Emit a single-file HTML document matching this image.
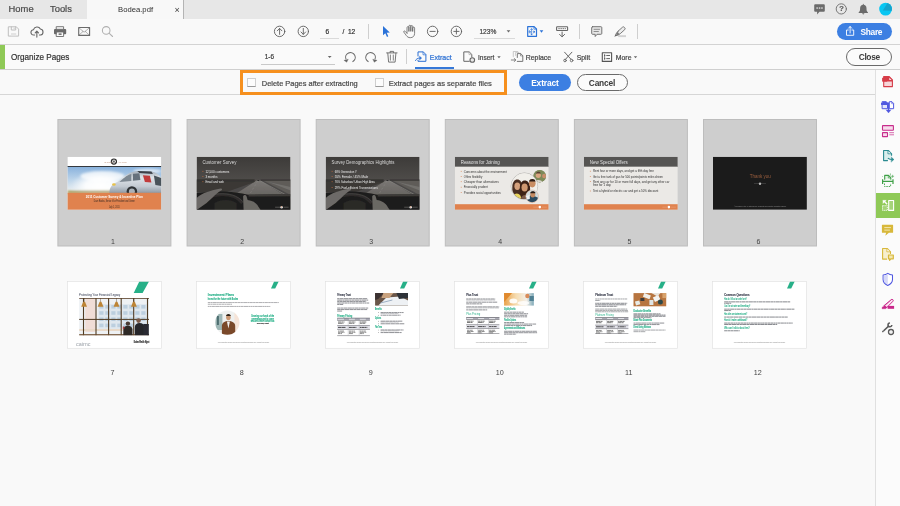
<!DOCTYPE html>
<html lang="en">
<head>
<meta charset="utf-8">
<title>Bodea.pdf - Organize Pages</title>
<style>
*{box-sizing:border-box;margin:0;padding:0}
html,body{width:900px;height:506px;overflow:hidden;background:#f9f9f9}
body{position:relative;font-family:"Liberation Sans",sans-serif;color:#3a3a3a;-webkit-font-smoothing:antialiased}
.abs{position:absolute}
.t{position:absolute;white-space:nowrap;line-height:1;transform-origin:0 50%;-webkit-text-stroke:.2px currentColor}
#tabbar{left:0;top:0;width:900px;height:19px;background:#e7e7e7}
#tab{left:87px;top:0;width:97px;height:19px;background:#f8f8f8;border-right:1px solid #b4b4b4}
#toolbar{left:0;top:19px;width:900px;height:26px;background:#f9f9f9;border-bottom:1px solid #d3d3d3}
#orgbar{left:0;top:45px;width:900px;height:25px;background:#fafafa;border-bottom:1px solid #cfcfcf}
#optbar{left:0;top:70px;width:875px;height:25px;background:#f9f9f9;border-bottom:1px solid #d6d6d6}
#green{left:0;top:45px;width:5px;height:24px;background:#8fc957}
#side{left:875px;top:70px;width:25px;height:436px;background:#fbfbfb;border-left:1px solid #e0e0e0}
#sidesel{left:875.500px;top:193px;width:24.500px;height:24.700px;background:#8fc957}
.sep{position:absolute;width:1px;background:#cfcfcf}
.ul{position:absolute;height:1px;background:#dadada}
svg{position:absolute;overflow:visible;z-index:5}
.pill{position:absolute;border-radius:20px}
.sel{position:absolute;width:114px;height:127px;background:#cecece;border:1px solid #bdbdbd;top:119px}
.num{position:absolute;font-size:7.6px;line-height:1;color:#444;width:30px;text-align:center}
.slide{position:absolute;top:157px;width:94px;height:53px;overflow:hidden;background:#fff}
.page{position:absolute;top:281px;width:95px;height:68px;overflow:hidden;background:#fff;box-shadow:0 0 0 .5px #e2e2e2}
</style>
</head>
<body>
<div id="wrap" style="position:absolute;left:0;top:0;width:900px;height:506px;will-change:transform">
<!-- ===== bars ===== -->
<div class="abs" id="tabbar"></div>
<div class="abs" id="tab"></div>
<div class="abs" id="toolbar"></div>
<div class="abs" id="orgbar"></div>
<div class="abs" id="optbar"></div>
<div class="abs" id="green"></div>
<div class="abs" id="side"></div>
<div class="abs" id="sidesel"></div>

<!-- ===== tab bar text ===== -->
<span class="t" style="left:8.600px;top:4.100px;font-size:9.400px;color:#4a4a4a">Home</span>
<span class="t" style="left:50px;top:4.100px;font-size:9.400px;color:#4a4a4a">Tools</span>
<span class="t" style="left:118px;top:6.200px;font-size:7.700px;color:#2e2e2e;-webkit-text-stroke:0">Bodea.pdf</span>
<span class="t" style="left:174.600px;top:6px;font-size:9px;color:#444;-webkit-text-stroke:0">×</span>

<svg id="tbsvg" width="900" height="506" viewBox="0 0 900 506" style="left:0;top:0" fill="none" stroke-linecap="round" stroke-linejoin="round">
<!-- save (disabled) -->
<g stroke="#bebebe" stroke-width="1">
<path d="M8.7 26.8h7.6l2.3 2.3v7H8.7z"/>
<path d="M11.3 26.8v3.2h4.4v-3.2"/>
<rect x="11" y="33" width="5.2" height="3.1" fill="#e4e4e4" stroke="none"/>
<rect x="13.6" y="27.6" width="1.1" height="1.6" fill="#d0d0d0" stroke="none"/>
</g>
<!-- cloud upload -->
<g stroke="#666" stroke-width="1.100">
<path d="M34.600 35h-.9a2.600 2.600 0 0 1-.3-5.200a3.800 3.800 0 0 1 7-.8a3.050 3.050 0 0 1 .2 6h-1.200"/>
<path d="M36.850 37.100v-5.700M35.200 32.900l1.650-1.800l1.650 1.800"/>
</g>
<!-- printer -->
<g>
<rect x="54" y="29" width="12.200" height="5.300" rx="1" fill="#6a6a6a"/>
<rect x="56.600" y="26.700" width="7" height="2.600" fill="#fafafa" stroke="#6a6a6a" stroke-width="0.9"/>
<rect x="56.600" y="32" width="7" height="4.500" fill="#fafafa" stroke="#6a6a6a" stroke-width="0.9"/>
<rect x="58.600" y="33.400" width="3" height="1.500" fill="#6a6a6a"/>
</g>
<!-- mail -->
<g stroke="#6a6a6a">
<rect x="78.700" y="27.500" width="10.900" height="7.900" stroke-width="1.100"/>
<path d="M79.200 28l3.900 3.400l-3.900 3.500M89.100 28l-3.900 3.400l3.900 3.500M83.100 31.400l1 .7l1.100-.7" stroke-width="0.500"/>
</g>
<!-- search -->
<g stroke="#b0b0b0" stroke-width="1.050">
<circle cx="106.200" cy="30.400" r="3.800"/>
<path d="M109 33.200l3.600 3.300"/>
</g>
<!-- page up/down -->
<g stroke="#5e5e5e" stroke-width="0.9">
<circle cx="279.600" cy="31.400" r="5.200"/>
<path d="M279.600 34.400v-5.800M277.300 30.800l2.300-2.400l2.300 2.400"/>
<circle cx="303.300" cy="31.400" r="5.200"/>
<path d="M303.300 28.400v5.800M301 32l2.300 2.400l2.300-2.400"/>
<circle cx="432.600" cy="31.400" r="5.200"/>
<path d="M430 31.400h5.200"/>
<circle cx="456.400" cy="31.400" r="5.200"/>
<path d="M453.800 31.400h5.200M456.400 28.800v5.200"/>
</g>
<!-- select cursor -->
<path d="M383 25.900V35.300L385.300 33.300L387 36.900L388.300 36.300L386.700 32.800L389.800 32.500Z" fill="#2a72d8"/>
<!-- hand -->
<g stroke="#5c5c5c" stroke-width="0.750">
<path d="M407 33.200v-5.600a.95.95 0 0 1 1.900 0v3.600M408.900 31v-4.800a.95.95 0 0 1 1.900 0v4.800M410.800 31v-4.500a.95.95 0 0 1 1.900 0v4.500M412.700 31.200v-3.100a.95.95 0 0 1 1.900 0v5.300c0 2.600-1.700 4.300-4.300 4.300c-1.900 0-3-.8-4-2.200l-2.500-3.400c-.5-.8.500-1.500 1.200-.9l2 2"/>
</g>
<!-- zoom dropdown triangle -->
<path d="M506.600 30.200h3.800l-1.900 2.200z" fill="#6a6a6a"/>
<!-- fit page -->
<g stroke="#2a72d8" stroke-width="1.200">
<path d="M527.700 26.600h6.400l2.400 2.400v7.300h-8.800z"/>
<path d="M533.900 26.800v2.400h2.400" stroke-width="0.700"/>
<path d="M531.600 28.800v6M530.700 29.700l.9-1l.9 1M530.700 33.900l.9 1l.9-1" stroke-width="0.700"/>
<ellipse cx="529.600" cy="31.800" rx="0.500" ry="1.200" stroke-width="0.700"/>
<ellipse cx="533.900" cy="31.800" rx="0.600" ry="1" stroke-width="0.700"/>
</g>
<path d="M539.700 30.300h3.600l-1.800 2.500z" fill="#2a72d8"/>
<!-- scroll mode -->
<g stroke="#666">
<rect x="556.600" y="26.800" width="11" height="3.700" rx="0.600" stroke-width="1.100"/>
<path d="M558.400 28.650h7.400" stroke-width="1" stroke-dasharray="1.300 0.800" stroke-linecap="butt"/>
<path d="M562.100 32v4.700M559.600 34.400l2.500 2.500l2.500-2.500" stroke-width="1"/>
</g>
<!-- comment -->
<g stroke="#666">
<path d="M592.600 26.700h8.300a.9.900 0 0 1 .9.900v5.800a.9.900 0 0 1-.9.900h-3.900l-1.800 2.200v-2.200h-2.600a.9.900 0 0 1-.9-.9v-5.800a.9.900 0 0 1 .9-.9z" fill="#e6e6e6" stroke-width="0.900"/>
<path d="M594 29.300h5.600M594 31.500h4.400" stroke-width="0.700"/>
</g>
<!-- highlighter -->
<g>
<rect x="618.200" y="35.200" width="7.800" height="1.900" fill="#d2d2d2"/>
<g transform="translate(614.300 36.800) rotate(-42)">
<path d="M0 0L3 -1.100V1.100Z" fill="#5e5e5e"/>
<path d="M3 -1.100L5.200 -1.650V1.650L3 1.100Z" fill="#7a7a7a" stroke="#666" stroke-width="0.400"/>
<rect x="5.200" y="-1.650" width="8.600" height="3.300" rx="1.300" fill="#ececec" stroke="#666" stroke-width="0.800"/>
</g>
</g>

<!-- top-right icons -->
<g>
<path d="M815.200 4.200h8.600a1 1 0 0 1 1 1v5.600a1 1 0 0 1-1 1h-4.300l-2.400 2.600v-2.600h-1.900a1 1 0 0 1-1-1v-5.600a1 1 0 0 1 1-1z" fill="#6b6b6b"/>
<rect x="816.400" y="7.400" width="1.500" height="1.300" fill="#e7e7e7"/><rect x="818.800" y="7.400" width="1.500" height="1.300" fill="#e7e7e7"/><rect x="821.200" y="7.400" width="1.500" height="1.300" fill="#e7e7e7"/>
<circle cx="841.300" cy="8.900" r="5.100" stroke="#6b6b6b" stroke-width="0.900"/>
<path d="M858.600 12.400c1.400-.9 1.500-2.300 1.500-4.100c0-2 1.200-3.500 3.200-3.500s3.200 1.500 3.200 3.500c0 1.800.1 3.200 1.500 4.100v.5h-9.400z" fill="#6b6b6b"/>
<path d="M862.200 13.300h2.200a1.100 1.100 0 0 1-2.200 0z" fill="#6b6b6b"/>
<rect x="862.900" y="3.900" width="0.800" height="1.200" fill="#6b6b6b"/>
<circle cx="885.600" cy="9.100" r="6.400" fill="#08c6f2"/>
<path d="M882.800 10.600L887.500 3A6.400 6.400 0 0 1 891.800 10.700Z" fill="#16a3cc"/>
</g>
<!-- share icon -->
<g stroke="#fff" stroke-width="0.900">
<path d="M848.300 30h-1.800v5.300h7.200v-5.300h-1.800"/>
<path d="M850.100 33v-6.400M848.500 28.200l1.600-1.700l1.600 1.700"/>
</g>
<!-- organize icons -->
<path d="M327.800 55.900h3.800l-1.900 2.200z" fill="#666"/>
<g stroke="#666" stroke-width="1.050" stroke-linecap="butt">
<path d="M352.500 61.700A4.800 4.800 0 1 0 346 59.200"/>
<path d="M343.900 60.300l4.400-1.100l-1.600 3.100z" fill="#666" stroke-width="0.300"/>
<path d="M368.500 61.700A4.800 4.800 0 1 1 375 59.200"/>
<path d="M377.100 60.300l-4.400-1.100l1.600 3.100z" fill="#666" stroke-width="0.300"/>
</g>
<g stroke="#666" stroke-width="0.900">
<path d="M386.600 52.900h10.500M390.100 52.700v-1.300h3.500v1.300"/>
<path d="M387.800 53.200l.8 8.900h6.500l.8-8.900"/>
<path d="M390.400 55v5.200M393.300 55v5.200" stroke-width="0.800"/>
</g>
<!-- extract icon -->
<g stroke="#2a6fd3" stroke-width="1">
<path d="M418 56v-4.100h5.300l2.600 2.600v6.800h-7.900v-1"/>
<path d="M423 52.100v2.700h2.700" stroke-width="0.700"/>
<path d="M415.500 60.600c.6-1.700 2-2.500 4.200-2.500" stroke-width="0.900"/>
<path d="M419.600 56.300l2.100 1.800l-2.100 1.800z" fill="#2a6fd3" stroke-width="0.400"/>
</g>
<!-- insert icon -->
<g stroke="#666" stroke-width="1">
<path d="M471.800 57v-2.600l-2.600-2.500h-5.400v9.400h5.500"/>
<path d="M469 52.100v2.500h2.600" stroke-width="0.600" stroke="#999"/>
<circle cx="472.300" cy="60" r="2.300" fill="#e8e8e8" stroke-width="1.100"/>
</g>
<path d="M497.300 56.300h3.400l-1.700 2z" fill="#666"/>
<!-- replace icon -->
<g stroke="#666">
<path d="M513.300 56.500v-5h4.500l1 1" stroke="#b5b5b5" stroke-width="0.700"/>
<path d="M515.500 55.500v-3h3" stroke="#b5b5b5" stroke-width="0.600"/>
<path d="M517.300 57.500v-3.900h3.400l2.100 2.100v5.700h-5.500" stroke-width="0.900"/>
<path d="M520.500 53.800v2.100h2.100" stroke-width="0.600"/>
<path d="M511.300 60h4.300M514.200 58.500l1.600 1.500l-1.600 1.500" stroke-width="0.800"/>
</g>
<!-- scissors -->
<g stroke="#666" stroke-width="1">
<path d="M564.600 52.200l6.500 7.200M571.900 52.200l-6.500 7.200"/>
<circle cx="565" cy="60.500" r="1.300" stroke-width="0.900"/>
<circle cx="571.600" cy="60.500" r="1.300" stroke-width="0.900"/>
</g>
<!-- more icon -->
<g stroke="#555">
<rect x="602.300" y="52.700" width="9.300" height="8.700" stroke-width="1.100"/>
<path d="M604 55.500h1.300M606.300 55.500h3.700M604 58.600h1.300M606.300 58.600h3.700" stroke-width="0.900" stroke-linecap="butt"/>
<path d="M604.600 54.500v5" stroke-width="0.700"/>
</g>
<path d="M633.800 56.300h3.400l-1.700 2z" fill="#666"/>
<!-- sidebar icons -->
<!-- 1 create pdf (red) -->
<g stroke="#d63c48" stroke-width="1.100">
<path d="M883.700 76.600h5.500l3.200 3.200v6.800h-8.700z" fill="#f6d6d9"/>
<path d="M883.700 76.600h5.500l3.200 3.200v1.800h-8.700z" fill="#d63c48" stroke="none"/>
<rect x="882.100" y="77.800" width="5" height="3.800" fill="#d63c48" stroke="none"/>
<path d="M889.300 77.800v2.200h2.200z" fill="#fbeff0" stroke="none"/>
</g>
<!-- 2 combine (blue) -->
<g stroke="#5058e0" stroke-width="1">
<path d="M882.500 101.700h3.800l1.200 1.200v5.800h-5z" fill="#e2e4fb"/>
<path d="M882.500 101.700h3.800l1.200 1.200v2h-5z" fill="#5058e0" stroke="none"/>
<rect x="881" y="102.900" width="3.600" height="2" fill="#5058e0" stroke="none"/>
<path d="M889.700 101.700h2.200l1.700 1.700v5.300h-3.900z" fill="#fff"/>
<path d="M891.700 101.900v1.800h1.700" stroke-width="0.600"/>
<path d="M888.500 102.500v8.500" stroke-width="1.300" stroke-linecap="butt"/>
<path d="M886.100 110l2.400 2.900l2.400-2.900z" fill="#5058e0" stroke-width="0.300"/>
</g>
<!-- 3 edit (magenta) -->
<g stroke="#c72d8c" stroke-width="1.100">
<rect x="882.500" y="125.600" width="10.900" height="4.600" rx="0.400" fill="#f7dcec"/>
<rect x="882.500" y="132.600" width="5" height="4" rx="0.300" fill="#f7dcec"/>
<path d="M889.300 132.700h4.700M889.300 134.800h4.700" stroke-width="0.700" stroke-linecap="butt"/>
</g>
<!-- 4 export (teal) -->
<g stroke="#2a8a90" stroke-width="1.100">
<path d="M887.500 160.600h-3.900v-10.100h4.700l3.300 3.300v1.400" fill="#d9eeec"/>
<path d="M888.300 150.500l3.300 3.300h-3.300z" fill="#fff" stroke-width="0.800"/>
<path d="M888.300 158.300c1 1 2 1.200 4.600 1.200" stroke-width="1.200"/>
<path d="M891.300 157l2.700 2.500l-2.700 2.500z" fill="#2a8a90" stroke-width="0.300"/>
</g>
<!-- 5 scan (green) -->
<g stroke="#3fa047" stroke-width="1.100">
<path d="M884.700 179.300v-3.900h3.800l2.300 2.300v1.600" fill="#e4f3e4"/>
<path d="M888.300 175.600v2.300h2.300" stroke-width="0.700"/>
<path d="M882.600 179.200v4.800M893 179.200v4.800M882.600 181.400h10.400" stroke-linecap="butt" stroke-width="1.200"/>
<path d="M884.500 183.500v3h6.100v-3" stroke-dasharray="1.500 0.900" stroke-linecap="butt" stroke-width="0.900"/>
<path d="M892.600 175.200v2.200M891.500 176.300h2.200M890.400 173.800v1.400" stroke-width="0.600"/>
<circle cx="882.400" cy="176.600" r="0.400" fill="#3fa047" stroke="none"/>
</g>
<!-- 6 organize pages (selected, white) -->
<g stroke="#fff" stroke-width="1.100">
<rect x="888.700" y="200.500" width="4.900" height="9.900" fill="#a5d478"/>
<rect x="882.500" y="205.700" width="4.800" height="4.700" fill="#a5d478" stroke-dasharray="1.200 0.800" stroke-linecap="butt" stroke-width="0.900"/>
<path d="M883 200.300h3.300l-1.100 1.100l2.300 2.300l-.9 .9l-2.300-2.300l-1.300 1.200z" fill="#fff" stroke-width="0.300"/>
</g>
<!-- 7 comment (gold) -->
<g>
<path d="M882.400 224.800h10.200a.5.500 0 0 1 .5.500v7a.5.500 0 0 1-.5.500h-3.700l-3.600 3l.8-3h-3.700a.5.500 0 0 1-.5-.5v-7a.5.500 0 0 1 .5-.5z" fill="#d8b83b"/>
<path d="M884.300 227.600h6.600M884.300 230.100h5.600" stroke="#f6ecc0" stroke-width="0.900" stroke-linecap="butt"/>
</g>
<!-- 8 page with comment (gold) -->
<g stroke="#d8b83b" stroke-width="1.100">
<path d="M886.800 259.100h-4.200v-10.600h4.600l3.300 3.300v1.600" fill="#f7efce"/>
<path d="M887.200 248.500l3.300 3.300h-3.300z" fill="#fff" stroke-width="0.800"/>
<path d="M888.500 255h4.800v3.800h-2.500l-1.200 1.500v-1.500h-1.100z" fill="#f3e6ae" stroke-width="1.200"/>
</g>
<!-- 9 protect shield (blue) -->
<g stroke="#5058e0" stroke-width="1.050">
<path d="M887.800 273.400c1.400 1 2.900 1.500 4.700 1.600v4.600c0 2.900-1.900 4.700-4.700 5.900c-2.800-1.200-4.700-3-4.700-5.900v-4.600c1.800-.1 3.300-.6 4.700-1.600z" fill="#fff"/>
<path d="M887.800 274.200c-1.300 .9-2.600 1.300-4 1.400v4c0 2.500 1.600 4.100 4 5.200z" fill="#d5d8f8" stroke="none"/>
</g>
<!-- 10 fill & sign (magenta) -->
<g stroke="#c9268a">
<path d="M891.100 299.700a1.200 1.200 0 0 1 1.800 1.600l-6 6.200l-2.700 -1.500z" fill="#fbe3f0" stroke-width="1"/>
<path d="M885.300 305.300l5.800-5.400" stroke-width="0.500"/>
<path d="M884.400 305.800l2.500 1.700l-1.200 1.300h-3.700v-1.200z" fill="#c9268a" stroke-width="0.300"/>
<path d="M887.600 307.350h6.500" stroke-width="2.900" stroke-linecap="butt"/>
</g>
<!-- 11 more tools (gray) -->
<g stroke="#5a5a5a">
<path d="M882.900 331.500l5.300-5" stroke-width="1.700"/>
<path d="M891.80 324.90A1.9 1.9 0 1 1 889.90 323.00" stroke-width="1.500" stroke-linecap="butt"/>

<circle cx="883.400" cy="331" r="0.400" fill="#e0e0e0" stroke="none"/>
<circle cx="891" cy="332" r="2.500" fill="#e2e2e2" stroke-width="1.300"/>
<path d="M891 330.600v2.800M889.600 332h2.800" stroke="#fafafa" stroke-width="0.800"/>
</g>
<!-- SVG4 -->
</svg>

<!-- toolbar text -->
<div class="sep" style="left:368px;top:24px;height:15px"></div>
<div class="sep" style="left:579px;top:24px;height:15px"></div>
<div class="sep" style="left:637px;top:24px;height:15px"></div>
<div class="ul" style="left:320px;top:38px;width:19px"></div>
<div class="ul" style="left:474px;top:38px;width:41px"></div>
<span class="t" style="left:325.400px;top:28.900px;font-size:6.600px;color:#333">6</span>
<span class="t" style="left:342.400px;top:28.900px;font-size:6.600px;color:#333">/&nbsp; 12</span>
<span class="t" style="left:479.400px;top:28.900px;font-size:6.600px;color:#444">123%</span>
<!-- share -->
<div class="pill" style="left:837px;top:23px;width:55px;height:17px;background:#3c7fe2"></div>
<span class="t" style="left:860.500px;top:28.400px;font-size:8.400px;letter-spacing:-.32px;font-weight:700;color:#fff;-webkit-text-stroke:0">Share</span>
<span class="t" style="left:839.300px;top:5.300px;font-size:7.500px;color:#5a5a5a;font-weight:700">?</span>
<!-- organize bar -->
<span class="t" style="left:10.900px;top:52.900px;font-size:8.300px;color:#333;transform:scaleX(.98)">Organize Pages</span>
<span class="t" style="left:264.800px;top:53.700px;font-size:6.400px;color:#3c3c3c">1-6</span>
<div class="ul" style="left:261px;top:64px;width:74px;background:#c9c9c9"></div>
<div class="sep" style="left:406px;top:49px;height:15px"></div>
<span class="t" style="left:429.800px;top:54px;font-size:7px;color:#2a6fd3">Extract</span>
<div class="abs" style="left:415px;top:67.400px;width:39px;height:1.600px;background:#3578d8"></div>
<span class="t" style="left:478px;top:54.700px;font-size:6.500px;color:#444">Insert</span>
<span class="t" style="left:525.800px;top:54.700px;font-size:6.900px;color:#444">Replace</span>
<span class="t" style="left:576.700px;top:54.700px;font-size:6.900px;color:#444">Split</span>
<span class="t" style="left:615.800px;top:54.700px;font-size:6.900px;color:#444">More</span>
<div class="pill" style="left:846px;top:48px;width:46px;height:17.500px;border:1px solid #6a6a6a;background:#fbfbfb"></div>
<span class="t" style="left:858.700px;top:52.600px;font-size:8.400px;letter-spacing:-.35px;font-weight:700;color:#3a3a3a;-webkit-text-stroke:0">Close</span>

<!-- options bar -->
<div class="abs" style="left:240px;top:70px;width:267px;height:25px;border:3px solid #f6901e"></div>
<div class="abs" style="left:247px;top:78px;width:9px;height:9px;border:1px solid #cfcfcf;border-bottom-color:#9a9a9a;background:#fcfcfc"></div>
<div class="abs" style="left:374.500px;top:78px;width:9px;height:9px;border:1px solid #cfcfcf;border-bottom-color:#9a9a9a;background:#fcfcfc"></div>
<span class="t" style="left:261.800px;top:80px;font-size:7.450px;color:#484848">Delete Pages after extracting</span>
<span class="t" style="left:388.700px;top:80px;font-size:7.550px;color:#484848">Extract pages as separate files</span>
<div class="pill" style="left:519px;top:74px;width:52px;height:17px;background:#3c7fe2"></div>
<span class="t" style="left:531.200px;top:78.500px;font-size:8.400px;letter-spacing:-.15px;font-weight:700;color:#fff;-webkit-text-stroke:0">Extract</span>
<div class="pill" style="left:577px;top:74px;width:50.500px;height:17px;border:1px solid #6a6a6a;background:#fbfbfb"></div>
<span class="t" style="left:588.800px;top:78.500px;font-size:8.400px;letter-spacing:-.2px;font-weight:700;color:#3a3a3a;-webkit-text-stroke:0">Cancel</span>

<!-- SIDEBAR -->
<!-- THUMBS-START -->
<svg id="thumbs" width="900" height="506" viewBox="0 0 900 506" style="left:0;top:0;z-index:4">
<defs>
<clipPath id="cs1"><rect x="67.4" y="156.8" width="93.9" height="53.0"/></clipPath>
<clipPath id="cs2"><rect x="196.6" y="156.8" width="93.9" height="53.0"/></clipPath>
<clipPath id="cs3"><rect x="325.7" y="156.8" width="93.9" height="53.0"/></clipPath>
<clipPath id="cs4"><rect x="454.8" y="156.8" width="93.9" height="53.0"/></clipPath>
<clipPath id="cs5"><rect x="583.9" y="156.8" width="93.9" height="53.0"/></clipPath>
<clipPath id="cs6"><rect x="713.0" y="156.8" width="93.9" height="53.0"/></clipPath>
<clipPath id="cp7"><rect x="67.3" y="281.3" width="94.4" height="67.2"/></clipPath>
<clipPath id="cp8"><rect x="196.4" y="281.3" width="94.4" height="67.2"/></clipPath>
<clipPath id="cp9"><rect x="325.4" y="281.3" width="94.4" height="67.2"/></clipPath>
<clipPath id="cp10"><rect x="454.4" y="281.3" width="94.4" height="67.2"/></clipPath>
<clipPath id="cp11"><rect x="583.4" y="281.3" width="94.4" height="67.2"/></clipPath>
<clipPath id="cp12"><rect x="712.4" y="281.3" width="94.4" height="67.2"/></clipPath>
<linearGradient id="sky" x1="0" y1="0" x2="0" y2="1"><stop offset="0" stop-color="#86b0dc"/><stop offset=".5" stop-color="#bcd4ea"/><stop offset="1" stop-color="#f1f3f2"/></linearGradient>
<radialGradient id="sun" cx="0.5" cy="0.5" r="0.5"><stop offset="0" stop-color="#fff" stop-opacity="1"/><stop offset=".5" stop-color="#fff" stop-opacity=".9"/><stop offset="1" stop-color="#fff" stop-opacity="0"/></radialGradient>
<linearGradient id="car" x1="0" y1="0" x2="0" y2="1"><stop offset="0" stop-color="#a3adb8"/><stop offset=".3" stop-color="#dfe4e9"/><stop offset=".7" stop-color="#c3cad2"/><stop offset="1" stop-color="#8f99a3"/></linearGradient>
<linearGradient id="dsky" x1="0" y1="0" x2="0" y2="1"><stop offset="0" stop-color="#3d3b39"/><stop offset="1" stop-color="#64615e"/></linearGradient>
<linearGradient id="road" x1="0" y1="0" x2="0" y2="1"><stop offset="0" stop-color="#7a7774"/><stop offset="1" stop-color="#55524f"/></linearGradient>
<linearGradient id="warm" x1="0" y1="0" x2="1" y2="0"><stop offset="0" stop-color="#e9a24a"/><stop offset=".4" stop-color="#f6dcb0"/><stop offset=".75" stop-color="#f3efe8"/><stop offset="1" stop-color="#7fa9b8"/></linearGradient>
<filter id="b1" x="-10%" y="-10%" width="120%" height="120%"><feGaussianBlur stdDeviation="0.45"/></filter>
<filter id="b2" x="-10%" y="-10%" width="120%" height="120%"><feGaussianBlur stdDeviation="0.8"/></filter>
<filter id="b0" x="-10%" y="-10%" width="120%" height="120%"><feGaussianBlur stdDeviation="0.25"/></filter>

</defs>
<rect x="57.9" y="119.5" width="113" height="126.500" fill="#cecece" stroke="#bdbdbd" stroke-width="1"/>
<text x="112.9" y="243.600" font-size="7" fill="#444" text-anchor="middle" font-family="Liberation Sans, sans-serif">1</text>
<rect x="187.1" y="119.5" width="113" height="126.500" fill="#cecece" stroke="#bdbdbd" stroke-width="1"/>
<text x="242.1" y="243.600" font-size="7" fill="#444" text-anchor="middle" font-family="Liberation Sans, sans-serif">2</text>
<rect x="316.2" y="119.5" width="113" height="126.500" fill="#cecece" stroke="#bdbdbd" stroke-width="1"/>
<text x="371.2" y="243.600" font-size="7" fill="#444" text-anchor="middle" font-family="Liberation Sans, sans-serif">3</text>
<rect x="445.3" y="119.5" width="113" height="126.500" fill="#cecece" stroke="#bdbdbd" stroke-width="1"/>
<text x="500.3" y="243.600" font-size="7" fill="#444" text-anchor="middle" font-family="Liberation Sans, sans-serif">4</text>
<rect x="574.4" y="119.5" width="113" height="126.500" fill="#cecece" stroke="#bdbdbd" stroke-width="1"/>
<text x="629.4" y="243.600" font-size="7" fill="#444" text-anchor="middle" font-family="Liberation Sans, sans-serif">5</text>
<rect x="703.5" y="119.5" width="113" height="126.500" fill="#cecece" stroke="#bdbdbd" stroke-width="1"/>
<text x="758.5" y="243.600" font-size="7" fill="#444" text-anchor="middle" font-family="Liberation Sans, sans-serif">6</text>
<text x="112.6" y="375.300" font-size="7.200" fill="#444" text-anchor="middle" font-family="Liberation Sans, sans-serif">7</text>
<text x="241.7" y="375.300" font-size="7.200" fill="#444" text-anchor="middle" font-family="Liberation Sans, sans-serif">8</text>
<text x="370.7" y="375.300" font-size="7.200" fill="#444" text-anchor="middle" font-family="Liberation Sans, sans-serif">9</text>
<text x="499.7" y="375.300" font-size="7.200" fill="#444" text-anchor="middle" font-family="Liberation Sans, sans-serif">10</text>
<text x="628.7" y="375.300" font-size="7.200" fill="#444" text-anchor="middle" font-family="Liberation Sans, sans-serif">11</text>
<text x="757.7" y="375.300" font-size="7.200" fill="#444" text-anchor="middle" font-family="Liberation Sans, sans-serif">12</text>
<g clip-path="url(#cs1)">
<rect x="67.4" y="156.8" width="93.9" height="53.0" fill="#fff"/>
<rect x="67.4" y="166.2" width="93.9" height="26.8" fill="url(#sky)"/>
<g filter="url(#b2)">
<ellipse cx="100.4" cy="186" rx="30" ry="15" fill="url(#sun)"/>
<ellipse cx="102.4" cy="176" rx="22" ry="5" fill="#fff" opacity=".7"/>
<ellipse cx="147.4" cy="171" rx="14" ry="2.500" fill="#fff" opacity=".6"/>
<rect x="67.4" y="190.800" width="44" height="2.500" fill="#9c8f45"/>
</g>
<g filter="url(#b1)">
<path d="M109.4 193 C109.4 187 112.4 184 117.4 182 C123.4 176 129.4 172 137.4 171 L151.4 171.500 C157.4 172.500 160.4 176 161.4 179 V193Z" fill="url(#car)"/>
<path d="M119.4 182 C124.4 177 128.4 174.500 131.4 174 L131.4 181Z" fill="#7d8892"/>
<path d="M132.9 173.700 L139.4 173.300 L140.4 180 L132.9 180.800Z" fill="#66717b"/>
<path d="M137.4 171 L151.4 171.500 L152.9 174 L139.4 173Z" fill="#3c4148"/>
<path d="M153.9 175.500 L161.3 178 V186 L155.4 185Z" fill="#4a525a"/>
<path d="M142.9 175.300 L149.9 175.800 L151.4 182.500 L144.9 182Z" fill="#c23a3a"/>
<circle cx="131.9" cy="191.500" r="5.300" fill="#2e3134"/>
<circle cx="131.9" cy="191.500" r="3" fill="#aab1b8"/>
<ellipse cx="113.9" cy="184.500" rx="1.800" ry="1.200" fill="#e8c24a"/>
</g>
<rect x="67.4" y="166" width="93.9" height=".85" fill="#222"/>
<rect x="67.4" y="192.800" width="93.9" height="17.100" fill="#e0824e"/>
<circle cx="113.9" cy="161.600" r="2.600" fill="#fff" stroke="#2b2b2b" stroke-width="1.100"/>
<path d="M113.9 159.400v4.400M112.0 160.500l3.800 2.200M115.80000000000001 160.500l-3.800 2.200" stroke="#2b2b2b" stroke-width=".5"/>
<text x="104.6" y="162.5" font-size="2.4" fill="#c09a84" font-family="Liberation Sans, sans-serif" letter-spacing=".2">BODEA</text>
<text x="117.7" y="162.5" font-size="2.4" fill="#c09a84" font-family="Liberation Sans, sans-serif" letter-spacing=".2">AUTOS</text>
<text x="114.3" y="197.6" font-size="4.3" fill="#fff" font-family="Liberation Sans, sans-serif" text-anchor="middle" font-weight="700" textLength="57" lengthAdjust="spacingAndGlyphs">2011 Customer Survey &amp; Incentive Plan</text>
<text x="114.3" y="202.2" font-size="2.7" fill="#3a2a22" font-family="Liberation Sans, sans-serif" text-anchor="middle" textLength="41" lengthAdjust="spacingAndGlyphs">Dave Bodea, Senior Vice President and Owner</text>
<text x="114.3" y="207.9" font-size="2.7" fill="#3a2a22" font-family="Liberation Sans, sans-serif" text-anchor="middle" textLength="10.500" lengthAdjust="spacingAndGlyphs">July 1, 2011</text>
</g>
<g clip-path="url(#cs2)">
<rect x="196.6" y="156.8" width="93.9" height="53.0" fill="url(#dsky)"/>
<g filter="url(#b1)">
<rect x="196.6" y="180.300" width="93.9" height="30" fill="#4c4a48"/>
<path d="M256.6 180.500 L260.1 180.500 L290.6 199 V210 H210.6 Z" fill="url(#road)"/>
<path d="M257.8 181 L248.6 196" stroke="#8a8885" stroke-width=".5" stroke-dasharray="2 2"/>
<path d="M260.3 180.800 L290.6 197.500" stroke="#8d8b88" stroke-width=".6"/>
<path d="M262.6 180.300 L290.6 180.300 V195Z" fill="#5e5c59"/>
<path d="M268.6 182 L290.6 187 V190.500Z" fill="#7a7875" opacity=".7"/>
<rect x="196.6" y="179.300" width="58" height="2.600" fill="#353331"/>
<rect x="260.6" y="179.300" width="30" height="1.500" fill="#3b3937"/>
<rect x="257.4" y="180" width="1.800" height="1" fill="#2a2a2a"/>
<path d="M196.6 182 H254.6 L226.6 192 H196.6Z" fill="#3a3836"/>
<path d="M196.6 193 C216.6 190 236.6 191.500 248.6 194.800 L290.6 194.300 V210 H196.6Z" fill="#1e1d1c"/>
<path d="M248.6 194.600 L290.6 194.100 V196.300 L248.6 196.600Z" fill="#3d3b39"/>
<path d="M198.6 205 C204.6 193 232.6 190 242.6 203" fill="none" stroke="#2d2c2b" stroke-width="3.200"/>
<path d="M198.6 203.500 C205.6 192.500 232.6 189.500 242.6 201.500" fill="none" stroke="#4a4846" stroke-width=".7"/>
<path d="M214.6 203 C220.6 199 230.6 199 236.6 203 V210 H214.6Z" fill="#2a2928"/>
<path d="M196.6 198 C202.6 192.500 210.6 190.500 220.6 188.500 C222.6 188.300 222.6 190 220.6 190.800 C216.6 193 212.6 198 206.6 203 L196.6 210Z" fill="#6d6a67"/>
<path d="M243.1 196.500 C243.6 194.500 246.1 194.500 246.6 196.500 L247.6 200 C252.6 200.500 256.6 203 258.6 207 L260.6 210 H243.6Z" fill="#6a6764"/>
</g>
<circle cx="281.6" cy="207.200" r="1.300" fill="#ddd"/>
<rect x="275.1" y="206.800" width="5" height=".7" fill="#6b6967"/><rect x="283.6" y="206.800" width="5" height=".7" fill="#6b6967"/>
<path d="M281.2 206.300l.8 .0l-.4 1.800z" fill="#d9753f"/>
<text x="202.4" y="163.7" font-size="5.4" fill="#d9d9d9" font-family="Liberation Sans, sans-serif" textLength="34" lengthAdjust="spacingAndGlyphs">Customer Survey</text>
<rect x="202.5" y="170.9" width=".8" height=".8" fill="#d9753f"/>
<text x="205.4" y="172.5" font-size="3.3" fill="#efefef" font-family="Liberation Sans, sans-serif" textLength="24" lengthAdjust="spacingAndGlyphs">12,500 customers</text>
<rect x="202.5" y="176.0" width=".8" height=".8" fill="#d9753f"/>
<text x="205.4" y="177.6" font-size="3.3" fill="#efefef" font-family="Liberation Sans, sans-serif" textLength="12" lengthAdjust="spacingAndGlyphs">3 months</text>
<rect x="202.5" y="181.3" width=".8" height=".8" fill="#d9753f"/>
<text x="205.4" y="182.9" font-size="3.3" fill="#efefef" font-family="Liberation Sans, sans-serif" textLength="18.5" lengthAdjust="spacingAndGlyphs">Email and web</text>
</g>
<g clip-path="url(#cs3)">
<rect x="325.7" y="156.8" width="93.9" height="53.0" fill="url(#dsky)"/>
<g filter="url(#b1)">
<rect x="325.7" y="180.300" width="93.9" height="30" fill="#4c4a48"/>
<path d="M385.7 180.500 L389.2 180.500 L419.7 199 V210 H339.7 Z" fill="url(#road)"/>
<path d="M386.9 181 L377.7 196" stroke="#8a8885" stroke-width=".5" stroke-dasharray="2 2"/>
<path d="M389.4 180.800 L419.7 197.500" stroke="#8d8b88" stroke-width=".6"/>
<path d="M391.7 180.300 L419.7 180.300 V195Z" fill="#5e5c59"/>
<path d="M397.7 182 L419.7 187 V190.500Z" fill="#7a7875" opacity=".7"/>
<rect x="325.7" y="179.300" width="58" height="2.600" fill="#353331"/>
<rect x="389.7" y="179.300" width="30" height="1.500" fill="#3b3937"/>
<rect x="386.5" y="180" width="1.800" height="1" fill="#2a2a2a"/>
<path d="M325.7 182 H383.7 L355.7 192 H325.7Z" fill="#3a3836"/>
<path d="M325.7 193 C345.7 190 365.7 191.500 377.7 194.800 L419.7 194.300 V210 H325.7Z" fill="#1e1d1c"/>
<path d="M377.7 194.600 L419.7 194.100 V196.300 L377.7 196.600Z" fill="#3d3b39"/>
<path d="M327.7 205 C333.7 193 361.7 190 371.7 203" fill="none" stroke="#2d2c2b" stroke-width="3.200"/>
<path d="M327.7 203.500 C334.7 192.500 361.7 189.500 371.7 201.500" fill="none" stroke="#4a4846" stroke-width=".7"/>
<path d="M343.7 203 C349.7 199 359.7 199 365.7 203 V210 H343.7Z" fill="#2a2928"/>
<path d="M325.7 198 C331.7 192.500 339.7 190.500 349.7 188.500 C351.7 188.300 351.7 190 349.7 190.800 C345.7 193 341.7 198 335.7 203 L325.7 210Z" fill="#6d6a67"/>
<path d="M372.2 196.500 C372.7 194.500 375.2 194.500 375.7 196.500 L376.7 200 C381.7 200.500 385.7 203 387.7 207 L389.7 210 H372.7Z" fill="#6a6764"/>
</g>
<circle cx="410.7" cy="207.200" r="1.300" fill="#ddd"/>
<rect x="404.2" y="206.800" width="5" height=".7" fill="#6b6967"/><rect x="412.7" y="206.800" width="5" height=".7" fill="#6b6967"/>
<path d="M410.29999999999995 206.300l.8 .0l-.4 1.800z" fill="#d9753f"/>
<text x="331.5" y="163.7" font-size="5.4" fill="#d9d9d9" font-family="Liberation Sans, sans-serif" textLength="63" lengthAdjust="spacingAndGlyphs">Survey Demographics Highlights</text>
<rect x="331.7" y="170.9" width=".8" height=".8" fill="#d9753f"/>
<text x="334.7" y="172.5" font-size="3.3" fill="#efefef" font-family="Liberation Sans, sans-serif" textLength="22" lengthAdjust="spacingAndGlyphs">68% Generation Y</text>
<rect x="331.7" y="176.0" width=".8" height=".8" fill="#d9753f"/>
<text x="334.7" y="177.6" font-size="3.3" fill="#efefef" font-family="Liberation Sans, sans-serif" textLength="33.5" lengthAdjust="spacingAndGlyphs">55% Female  /  45% Male</text>
<rect x="331.7" y="181.3" width=".8" height=".8" fill="#d9753f"/>
<text x="334.7" y="182.9" font-size="3.3" fill="#efefef" font-family="Liberation Sans, sans-serif" textLength="40" lengthAdjust="spacingAndGlyphs">76% Suburban/ Urban High Area</text>
<rect x="331.7" y="187.0" width=".8" height=".8" fill="#d9753f"/>
<text x="334.7" y="188.6" font-size="3.3" fill="#efefef" font-family="Liberation Sans, sans-serif" textLength="43" lengthAdjust="spacingAndGlyphs">29% Fuel-efficient Transmissions</text>
</g>
<g clip-path="url(#cs4)">
<rect x="454.8" y="156.8" width="93.9" height="53.0" fill="#ebe9e6"/>
<rect x="454.8" y="156.8" width="93.9" height="9.900" fill="#555453"/>
<rect x="454.8" y="166.300" width="93.9" height=".6" fill="#8a8886"/>
<rect x="454.8" y="204.200" width="93.9" height="5.700" fill="#e0824e"/>
<text x="460.7" y="163.8" font-size="5.3" fill="#e2e2e2" font-family="Liberation Sans, sans-serif" textLength="39" lengthAdjust="spacingAndGlyphs">Reasons for Joining</text>
<circle cx="539.8" cy="207.100" r="1.300" fill="#fff"/>
<rect x="533.3" y="206.800" width="5" height=".6" fill="#eba27c"/><rect x="541.8" y="206.800" width="5" height=".6" fill="#eba27c"/>
<rect x="460.8" y="170.9" width=".8" height=".8" fill="#d9753f"/>
<text x="463.8" y="172.5" font-size="3.3" fill="#2e2e2e" font-family="Liberation Sans, sans-serif" textLength="43" lengthAdjust="spacingAndGlyphs">Concerns about the environment</text>
<rect x="460.8" y="176.0" width=".8" height=".8" fill="#d9753f"/>
<text x="463.8" y="177.6" font-size="3.3" fill="#2e2e2e" font-family="Liberation Sans, sans-serif" textLength="18.5" lengthAdjust="spacingAndGlyphs">Offers flexibility</text>
<rect x="460.8" y="181.3" width=".8" height=".8" fill="#d9753f"/>
<text x="463.8" y="182.9" font-size="3.3" fill="#2e2e2e" font-family="Liberation Sans, sans-serif" textLength="35" lengthAdjust="spacingAndGlyphs">Cheaper than alternatives</text>
<rect x="460.8" y="186.8" width=".8" height=".8" fill="#d9753f"/>
<text x="463.8" y="188.4" font-size="3.3" fill="#2e2e2e" font-family="Liberation Sans, sans-serif" textLength="24" lengthAdjust="spacingAndGlyphs">Financially prudent</text>
<rect x="460.8" y="192.0" width=".8" height=".8" fill="#d9753f"/>
<text x="463.8" y="193.6" font-size="3.3" fill="#2e2e2e" font-family="Liberation Sans, sans-serif" textLength="37" lengthAdjust="spacingAndGlyphs">Provides social opportunities</text>
<g filter="url(#b0)">
<circle cx="539.7" cy="176.200" r="6.200" fill="#8e8a6a"/>
<clipPath id="c4a"><circle cx="539.7" cy="176.200" r="6.200"/></clipPath>
<g clip-path="url(#c4a)"><rect x="532.8" y="170" width="14" height="13" fill="#7d8b5a"/><circle cx="538.3" cy="175.300" r="2.600" fill="#d9a680"/><path d="M533.8 183c0-4 9-4 9 0z" fill="#d8d4cc"/><circle cx="544.3" cy="176" r="2.200" fill="#c98f6c"/><path d="M535.8 173.500c1-2.500 4.500-2.500 5 0z" fill="#5a4030"/></g>
<circle cx="524.4" cy="186.200" r="13.300" fill="#f6f4f0" stroke="#8f8d8a" stroke-width=".5"/>
<clipPath id="c4b"><circle cx="524.4" cy="186.200" r="12.900"/></clipPath>
<g clip-path="url(#c4b)"><rect x="510.8" y="172" width="28" height="28" fill="#f1efea"/><path d="M512.3 200v-13c0-5 2.300-7.500 5-7.500s5 2.500 5 7.500v13z" fill="#4a2f22"/><ellipse cx="517.3" cy="186.300" rx="2.900" ry="3.700" fill="#d4a07c"/><path d="M519.8 200v-12c0-5 2.300-7.500 5-7.500s5.300 2.500 5.300 7.500v12z" fill="#3c2419"/><ellipse cx="524.6" cy="187.500" rx="3.100" ry="3.900" fill="#cf9870"/><path d="M527.3 200c0-7 2-10 6-10s6 3 6 10z" fill="#f2f2f4"/><ellipse cx="532.3" cy="183.300" rx="3.300" ry="4.100" fill="#c98d64"/><path d="M529.0 181.500c.3-3.300 6.200-3.300 6.600 0z" fill="#2a1c14"/><path d="M511.8 200c0-4 2-6.500 5-6.500s4.500 2.500 4.500 6.500z" fill="#e9d560"/><path d="M520.8 200c0-3.500 2-5 4.300-5s4.200 1.500 4.200 5z" fill="#7a5a4a"/></g>
<circle cx="532.1" cy="196.300" r="6.300" fill="#c9d3d6" stroke="#e8a07a" stroke-width=".5"/>
<clipPath id="c4c"><circle cx="532.1" cy="196.300" r="6"/></clipPath>
<g clip-path="url(#c4c)"><rect x="525.8" y="190" width="13" height="13" fill="#cfd8da"/><path d="M525.8 203v-6l6-2l7 3v5z" fill="#2c4a5e"/><ellipse cx="532.8" cy="194.600" rx="2.500" ry="2.900" fill="#c48a62"/><path d="M530.2 193.200c.3-2.600 5-2.600 5.300 0z" fill="#2a1c14"/><path d="M525.8 196l4-1v4l-4 1z" fill="#f0f0f0"/></g>
</g>
</g>
<g clip-path="url(#cs5)">
<rect x="583.9" y="156.8" width="93.9" height="53.0" fill="#ebe9e6"/>
<rect x="583.9" y="156.8" width="93.9" height="9.900" fill="#555453"/>
<rect x="583.9" y="166.300" width="93.9" height=".6" fill="#8a8886"/>
<rect x="583.9" y="204.200" width="93.9" height="5.700" fill="#e0824e"/>
<text x="589.8" y="163.8" font-size="5.3" fill="#e2e2e2" font-family="Liberation Sans, sans-serif" textLength="38" lengthAdjust="spacingAndGlyphs">New Special Offers</text>
<circle cx="668.9" cy="207.100" r="1.300" fill="#fff"/>
<rect x="662.4" y="206.800" width="5" height=".6" fill="#eba27c"/><rect x="670.9" y="206.800" width="5" height=".6" fill="#eba27c"/>
<rect x="589.9" y="170.8" width=".8" height=".8" fill="#d9753f"/>
<text x="592.9" y="172.4" font-size="3.2" fill="#2e2e2e" font-family="Liberation Sans, sans-serif" textLength="61" lengthAdjust="spacingAndGlyphs">Rent four or more days, and get a fifth day free</text>
<rect x="589.9" y="176.0" width=".8" height=".8" fill="#d9753f"/>
<text x="592.9" y="177.6" font-size="3.2" fill="#2e2e2e" font-family="Liberation Sans, sans-serif" textLength="70" lengthAdjust="spacingAndGlyphs">Get a free tank of gas for 500 points/points miles driven</text>
<rect x="589.9" y="181.2" width=".8" height=".8" fill="#d9753f"/>
<text x="592.9" y="182.8" font-size="3.2" fill="#2e2e2e" font-family="Liberation Sans, sans-serif" textLength="76.5" lengthAdjust="spacingAndGlyphs">Rent any car for 10 or more full days, and get any other car</text>
<text x="592.9" y="186.3" font-size="3.2" fill="#2e2e2e" font-family="Liberation Sans, sans-serif" textLength="18" lengthAdjust="spacingAndGlyphs">free for 1 day</text>
<rect x="589.9" y="190.6" width=".8" height=".8" fill="#d9753f"/>
<text x="592.9" y="192.2" font-size="3.2" fill="#2e2e2e" font-family="Liberation Sans, sans-serif" textLength="65.5" lengthAdjust="spacingAndGlyphs">Test a hybrid or electric car and get a 50% discount</text>
</g>
<g clip-path="url(#cs6)">
<rect x="713.0" y="156.8" width="93.9" height="53.0" fill="#1b1b1b"/>
<text x="760.3" y="177.8" font-size="5.6" fill="#9c5f3e" font-family="Liberation Sans, sans-serif" text-anchor="middle" textLength="21" lengthAdjust="spacingAndGlyphs">Thank you</text>
<rect x="754.0" y="183.500" width="12" height=".5" fill="#555"/>
<circle cx="760.0" cy="183.800" r="1.200" fill="#bbb"/>
<text x="760.3" y="207.0" font-size="1.8" fill="#9a9a9a" font-family="Liberation Sans, sans-serif" text-anchor="middle" textLength="52" lengthAdjust="spacingAndGlyphs">© 2011 Bodea Autos. All rights reserved. Confidential and proprietary information of Bodea.</text>
</g>
<g clip-path="url(#cp7)">
<rect x="67.3" y="281.3" width="94.4" height="67.2" fill="#fff"/>
<path d="M139.39999999999998 281.300h9.700l-6.500 11.800h-8.900z" fill="#27b088"/>
<text x="79.1" y="296.0" font-size="2.7" fill="#6d7280" font-family="Liberation Sans, sans-serif" textLength="41.200" lengthAdjust="spacingAndGlyphs" stroke="#6d7280" stroke-width=".1">Protecting Your Financial Legacy</text>
<clipPath id="c7"><rect x="79.1" y="298" width="70" height="37.600"/></clipPath>
<g clip-path="url(#c7)" filter="url(#b0)">
<rect x="79.1" y="298" width="70" height="37.600" fill="#eef1f4"/>
<rect x="85.3" y="299" width="10" height="33" fill="#f0ddd6"/>
<rect x="98.3" y="304" width="49" height="26" fill="#dfe7ee"/>
<rect x="99.3" y="305.0" width="4.200" height="3.600" fill="#bccfdf"/>
<rect x="105.3" y="305.0" width="4.200" height="3.600" fill="#bccfdf"/>
<rect x="111.3" y="305.0" width="4.200" height="3.600" fill="#bccfdf"/>
<rect x="117.3" y="305.0" width="4.200" height="3.600" fill="#bccfdf"/>
<rect x="123.3" y="305.0" width="4.200" height="3.600" fill="#bccfdf"/>
<rect x="129.3" y="305.0" width="4.200" height="3.600" fill="#bccfdf"/>
<rect x="135.3" y="305.0" width="4.200" height="3.600" fill="#bccfdf"/>
<rect x="141.3" y="305.0" width="4.200" height="3.600" fill="#bccfdf"/>
<rect x="99.3" y="311.2" width="4.200" height="3.600" fill="#bccfdf"/>
<rect x="105.3" y="311.2" width="4.200" height="3.600" fill="#bccfdf"/>
<rect x="111.3" y="311.2" width="4.200" height="3.600" fill="#bccfdf"/>
<rect x="117.3" y="311.2" width="4.200" height="3.600" fill="#bccfdf"/>
<rect x="123.3" y="311.2" width="4.200" height="3.600" fill="#bccfdf"/>
<rect x="129.3" y="311.2" width="4.200" height="3.600" fill="#bccfdf"/>
<rect x="135.3" y="311.2" width="4.200" height="3.600" fill="#bccfdf"/>
<rect x="141.3" y="311.2" width="4.200" height="3.600" fill="#bccfdf"/>
<rect x="99.3" y="317.4" width="4.200" height="3.600" fill="#bccfdf"/>
<rect x="105.3" y="317.4" width="4.200" height="3.600" fill="#bccfdf"/>
<rect x="111.3" y="317.4" width="4.200" height="3.600" fill="#bccfdf"/>
<rect x="117.3" y="317.4" width="4.200" height="3.600" fill="#bccfdf"/>
<rect x="123.3" y="317.4" width="4.200" height="3.600" fill="#bccfdf"/>
<rect x="129.3" y="317.4" width="4.200" height="3.600" fill="#bccfdf"/>
<rect x="135.3" y="317.4" width="4.200" height="3.600" fill="#bccfdf"/>
<rect x="141.3" y="317.4" width="4.200" height="3.600" fill="#bccfdf"/>
<rect x="99.3" y="323.6" width="4.200" height="3.600" fill="#bccfdf"/>
<rect x="105.3" y="323.6" width="4.200" height="3.600" fill="#bccfdf"/>
<rect x="111.3" y="323.6" width="4.200" height="3.600" fill="#bccfdf"/>
<rect x="117.3" y="323.6" width="4.200" height="3.600" fill="#bccfdf"/>
<rect x="123.3" y="323.6" width="4.200" height="3.600" fill="#bccfdf"/>
<rect x="129.3" y="323.6" width="4.200" height="3.600" fill="#bccfdf"/>
<rect x="135.3" y="323.6" width="4.200" height="3.600" fill="#bccfdf"/>
<rect x="141.3" y="323.6" width="4.200" height="3.600" fill="#bccfdf"/>
<rect x="79.1" y="329" width="44" height="2" fill="#e9d9c8"/>
<rect x="82.95" y="298" width="1.100" height="37.600" fill="#4f3a22"/>
<rect x="95.45" y="298" width="1.100" height="37.600" fill="#4f3a22"/>
<rect x="108.05" y="298" width="1.100" height="37.600" fill="#4f3a22"/>
<rect x="120.65" y="298" width="1.100" height="37.600" fill="#4f3a22"/>
<rect x="133.15" y="298" width="1.100" height="37.600" fill="#4f3a22"/>
<rect x="146.95" y="298" width="1.100" height="37.600" fill="#4f3a22"/>
<rect x="79.1" y="318.900" width="70" height="1" fill="#4f3a22"/>
<rect x="79.1" y="298" width="70" height=".8" fill="#5a4228"/>
<rect x="79.1" y="334.200" width="70" height="1.400" fill="#6b4a2a"/>
<rect x="83.9" y="298" width=".4" height="4" fill="#4f3a22"/>
<path d="M83.2 301.800h1.800l2 5h-5.800z" fill="#bd8436"/>
<rect x="100.3" y="298" width=".4" height="4" fill="#4f3a22"/>
<path d="M99.6 301.800h1.800l2 5h-5.800z" fill="#bd8436"/>
<rect x="116.3" y="298" width=".4" height="4" fill="#4f3a22"/>
<path d="M115.6 301.800h1.800l2 5h-5.800z" fill="#bd8436"/>
<rect x="133.7" y="298" width=".4" height="4" fill="#4f3a22"/>
<path d="M133.0 301.800h1.800l2 5h-5.800z" fill="#bd8436"/>
<path d="M123.3 335.600v-6c0-2.500 2-3.800 4.600-3.800s4.600 1.300 4.600 3.800v6z" fill="#2e2a28"/>
<circle cx="127.9" cy="323.600" r="2.200" fill="#4a3a30"/>
<path d="M134.8 335.600v-8c0-3 2-4.500 4.800-4.500s5 1.500 5 4.500l4.500 8z" fill="#26272b"/>
<rect x="143.3" y="324" width="5.500" height="11" fill="#2a2b30"/>
<circle cx="138.6" cy="320.600" r="2.300" fill="#7a5a48"/>
<rect x="122.8" y="326.500" width="1.500" height="2.500" fill="#b03a3a"/>
</g>
<text x="76.0" y="346.4" font-size="5.2" fill="#9ba1a8" font-family="Liberation Sans, sans-serif" textLength="14.500" lengthAdjust="spacingAndGlyphs">cairnc</text>
<text x="133.8" y="343.2" font-size="2.6" fill="#222" font-family="Liberation Sans, sans-serif" font-weight="700" textLength="15.500" lengthAdjust="spacingAndGlyphs" stroke="#222" stroke-width=".1">Bodea Wealth Mgmt</text>
</g>
<rect x="67.55" y="281.55" width="93.9" height="66.7" fill="none" stroke="#dedede" stroke-width=".6"/>
<g clip-path="url(#cp8)">
<rect x="196.4" y="281.3" width="94.4" height="67.2" fill="#fff"/>
<path d="M274.2 281.300h4.600l-3.600 7.300h-4.200z" fill="#27b088"/>
<text x="207.8" y="296.0" font-size="2.9" fill="#27b088" font-family="Liberation Sans, sans-serif" font-weight="700" textLength="26.300" lengthAdjust="spacingAndGlyphs" stroke="#27b088" stroke-width=".1">Investment Plans</text>
<text x="207.8" y="300.2" font-size="2.6" fill="#27b088" font-family="Liberation Sans, sans-serif" font-weight="700" textLength="30.200" lengthAdjust="spacingAndGlyphs" stroke="#27b088" stroke-width=".1">Invest for the future with Bodea</text>
<path d="M207.8 302.55h71" stroke="#3c3c44" stroke-width="0.50" stroke-dasharray="2.6 .3 2.0 .3 3.8 .3 1.8 .3 3.4 .3" opacity="0.8" fill="none"/>
<path d="M207.8 304.25h24.5" stroke="#3c3c44" stroke-width="0.50" stroke-dasharray="2.8 .3 1.7 .3 3.3 .3 1.6 .3 3.0 .3" opacity="0.8" fill="none"/>
<path d="M207.8 306.45h62.5" stroke="#3c3c44" stroke-width="0.50" stroke-dasharray="1.7 .3 1.8 .3 3.0 .3 4.4 .3 1.9 .3" opacity="0.8" fill="none"/>
<clipPath id="c8"><circle cx="227.3" cy="322.600" r="12.200"/></clipPath>
<g clip-path="url(#c8)" filter="url(#b0)">
<rect x="214.4" y="310" width="26" height="26" fill="#eef0ef"/>
<rect x="215.4" y="314" width="7" height="16" fill="#9fb7b6"/>
<rect x="216.9" y="316" width="2" height="9" fill="#4d6e70"/>
<rect x="234.4" y="312" width="6" height="22" fill="#f6e4d8"/>
<path d="M221.9 336v-10c0-3.500 3-5 6.500-5s6.800 1.500 6.800 5v10z" fill="#7a4a2c"/>
<path d="M226.9 321.500h3l-1.500 7z" fill="#f0f0f0"/>
<ellipse cx="228.4" cy="317.300" rx="2.300" ry="2.900" fill="#c99672"/>
<path d="M226.0 316c.3-2.800 4.500-2.800 4.900 0z" fill="#2e2119"/>
</g>
<text x="262.7" y="316.9" font-size="2.6" fill="#27b088" font-family="Liberation Sans, sans-serif" text-anchor="middle" font-weight="700" textLength="23" lengthAdjust="spacingAndGlyphs" stroke="#27b088" stroke-width=".1">Growing our funds of the</text>
<text x="262.7" y="319.5" font-size="2.6" fill="#27b088" font-family="Liberation Sans, sans-serif" text-anchor="middle" font-weight="700" textLength="22.5" lengthAdjust="spacingAndGlyphs" stroke="#27b088" stroke-width=".1">generations yet to come</text>
<text x="262.7" y="322.2" font-size="2.6" fill="#27b088" font-family="Liberation Sans, sans-serif" text-anchor="middle" font-weight="700" textLength="24" lengthAdjust="spacingAndGlyphs" stroke="#27b088" stroke-width=".1">secures  their tomorrow.</text>
<text x="262.7" y="324.2" font-size="1.7" fill="#222" font-family="Liberation Sans, sans-serif" text-anchor="middle" font-weight="700" textLength="12" lengthAdjust="spacingAndGlyphs" stroke="#222" stroke-width=".1">John Doe, Client</text>
<text x="243.6" y="343.0" font-size="1.7" fill="#b8b8b8" font-family="Liberation Sans, sans-serif" text-anchor="middle" textLength="51.500" lengthAdjust="spacingAndGlyphs" stroke="#b8b8b8" stroke-width=".1">The information provided is for general educational purposes only. Consult your advisor.</text>
</g>
<rect x="196.65" y="281.55" width="93.9" height="66.7" fill="none" stroke="#dedede" stroke-width=".6"/>
<g clip-path="url(#cp9)">
<rect x="325.4" y="281.3" width="94.4" height="67.2" fill="#fff"/>
<path d="M403.2 281.300h4.600l-3.600 7.300h-4.200z" fill="#27b088"/>
<text x="337.2" y="296.0" font-size="2.6" fill="#3d4150" font-family="Liberation Sans, sans-serif" font-weight="700" textLength="13.8" lengthAdjust="spacingAndGlyphs" stroke="#3d4150" stroke-width=".1">Primary Trust</text>
<path d="M337.2 298.67h30" stroke="#33363f" stroke-width="0.55" stroke-dasharray="2.3 .3 3.7 .3 4.8 .3 3.5 .3 2.9 .3" opacity="1" fill="none"/>
<path d="M337.2 300.12h31" stroke="#33363f" stroke-width="0.55" stroke-dasharray="4.9 .3 1.7 .3 4.5 .3 2.5 .3 2.0 .3" opacity="1" fill="none"/>
<path d="M337.2 301.57h29" stroke="#33363f" stroke-width="0.55" stroke-dasharray="1.9 .3 2.6 .3 4.4 .3 2.1 .3 3.5 .3" opacity="1" fill="none"/>
<path d="M337.2 303.02h32" stroke="#33363f" stroke-width="0.55" stroke-dasharray="3.7 .3 2.8 .3 3.4 .3 1.7 .3 1.7 .3" opacity="1" fill="none"/>
<path d="M337.2 304.47h6" stroke="#33363f" stroke-width="0.55" stroke-dasharray="2.2 .3 3.9 .3 3.0 .3 2.6 .3 3.5 .3" opacity="1" fill="none"/>
<path d="M337.2 308.07h31" stroke="#33363f" stroke-width="0.55" stroke-dasharray="3.1 .3 2.5 .3 4.3 .3 3.9 .3 2.4 .3" opacity="1" fill="none"/>
<path d="M337.2 309.57h30" stroke="#33363f" stroke-width="0.55" stroke-dasharray="3.5 .3 3.3 .3 4.6 .3 4.1 .3 2.5 .3" opacity="1" fill="none"/>
<path d="M337.2 311.07h5" stroke="#33363f" stroke-width="0.55" stroke-dasharray="4.9 .3 1.9 .3 3.0 .3 4.1 .3 2.0 .3" opacity="1" fill="none"/>
<text x="337.2" y="316.6" font-size="2.8" fill="#27b088" font-family="Liberation Sans, sans-serif" font-weight="700" textLength="15" lengthAdjust="spacingAndGlyphs" stroke="#27b088" stroke-width=".1">Primary Pricing</text>
<rect x="337.2" y="318.0" width="32.7" height="2.4" fill="#a9a9b4"/>
<rect x="337.2" y="320.4" width="32.7" height="5.2" fill="#fff"/>
<rect x="337.2" y="325.6" width="32.7" height="3.8" fill="#e1e1e8"/>
<rect x="337.2" y="329.4" width="32.7" height="6.4" fill="#fff"/>
<rect x="337.2" y="317.8" width="32.7" height=".45" fill="#4a4a52"/>
<rect x="337.2" y="320.2" width="32.7" height=".45" fill="#4a4a52"/>
<rect x="337.2" y="325.4" width="32.7" height=".45" fill="#4a4a52"/>
<rect x="337.2" y="329.2" width="32.7" height=".45" fill="#4a4a52"/>
<rect x="337.2" y="335.6" width="32.7" height=".45" fill="#4a4a52"/>
<rect x="347.9" y="318" width=".3" height="17.8" fill="#9a9aa2"/>
<rect x="358.9" y="318" width=".3" height="17.8" fill="#9a9aa2"/>
<rect x="338.0" y="318.8" width="6" height=".8" fill="#f0f0f4"/>
<path d="M338.0 322.00h6.5" stroke="#222" stroke-width="0.60" stroke-dasharray="3.2 .3 1.6 .3 3.8 .3 4.2 .3 3.5 .3" opacity="1" fill="none"/>
<path d="M338.0 323.30h5.5" stroke="#222" stroke-width="0.60" stroke-dasharray="4.6 .3 2.6 .3 3.9 .3 3.6 .3 3.5 .3" opacity="1" fill="none"/>
<path d="M338.0 327.40h7.5" stroke="#222" stroke-width="0.80" stroke-dasharray="3.1 .3 4.4 .3 4.8 .3 3.2 .3 3.8 .3" opacity="1" fill="none"/>
<path d="M338.0 331.07h6" stroke="#333" stroke-width="0.55" stroke-dasharray="1.7 .3 4.0 .3 3.8 .3 5.0 .3 4.4 .3" opacity="1" fill="none"/>
<path d="M338.0 332.32h6.5" stroke="#333" stroke-width="0.55" stroke-dasharray="2.5 .3 2.9 .3 3.8 .3 1.6 .3 3.1 .3" opacity="1" fill="none"/>
<path d="M338.0 333.57h4" stroke="#333" stroke-width="0.55" stroke-dasharray="2.1 .3 1.9 .3 1.7 .3 4.2 .3 2.0 .3" opacity="1" fill="none"/>
<rect x="348.9" y="318.8" width="6" height=".8" fill="#f0f0f4"/>
<path d="M348.9 322.00h6.5" stroke="#222" stroke-width="0.60" stroke-dasharray="2.4 .3 2.9 .3 4.5 .3 1.8 .3 3.1 .3" opacity="1" fill="none"/>
<path d="M348.9 323.30h5.5" stroke="#222" stroke-width="0.60" stroke-dasharray="3.4 .3 4.6 .3 4.4 .3 4.5 .3 2.5 .3" opacity="1" fill="none"/>
<path d="M348.9 327.40h7.5" stroke="#222" stroke-width="0.80" stroke-dasharray="3.0 .3 2.8 .3 4.6 .3 4.9 .3 2.0 .3" opacity="1" fill="none"/>
<path d="M348.9 331.07h6" stroke="#333" stroke-width="0.55" stroke-dasharray="2.1 .3 2.3 .3 2.3 .3 3.2 .3 3.6 .3" opacity="1" fill="none"/>
<path d="M348.9 332.32h6.5" stroke="#333" stroke-width="0.55" stroke-dasharray="2.4 .3 1.5 .3 3.0 .3 2.8 .3 3.5 .3" opacity="1" fill="none"/>
<path d="M348.9 333.57h4" stroke="#333" stroke-width="0.55" stroke-dasharray="4.8 .3 3.9 .3 3.3 .3 3.7 .3 3.9 .3" opacity="1" fill="none"/>
<rect x="359.8" y="318.8" width="6" height=".8" fill="#f0f0f4"/>
<path d="M359.8 322.00h6.5" stroke="#222" stroke-width="0.60" stroke-dasharray="1.7 .3 4.6 .3 4.2 .3 4.6 .3 4.3 .3" opacity="1" fill="none"/>
<path d="M359.8 323.30h5.5" stroke="#222" stroke-width="0.60" stroke-dasharray="2.9 .3 2.9 .3 1.9 .3 3.7 .3 1.7 .3" opacity="1" fill="none"/>
<path d="M359.8 327.40h7.5" stroke="#222" stroke-width="0.80" stroke-dasharray="1.7 .3 2.2 .3 2.1 .3 2.7 .3 1.7 .3" opacity="1" fill="none"/>
<path d="M359.8 331.07h6" stroke="#333" stroke-width="0.55" stroke-dasharray="1.5 .3 2.0 .3 1.9 .3 2.8 .3 1.6 .3" opacity="1" fill="none"/>
<path d="M359.8 332.32h6.5" stroke="#333" stroke-width="0.55" stroke-dasharray="4.6 .3 3.6 .3 2.0 .3 2.4 .3 2.7 .3" opacity="1" fill="none"/>
<path d="M359.8 333.57h4" stroke="#333" stroke-width="0.55" stroke-dasharray="2.8 .3 1.9 .3 4.5 .3 5.0 .3 3.1 .3" opacity="1" fill="none"/>
<g filter="url(#b0)"><rect x="375.09999999999997" y="293.100" width="32.900" height="12.500" fill="#6a5648"/>
<path d="M375.09999999999997 293.100h9l-6 6l-3 1z" fill="#3a3030"/><path d="M378.4 305.600l8-8l14-1l7.600 4v5z" fill="#eef1f4"/><path d="M383.4 293.100h10l-4 5h-8z" fill="#c9a27e"/><path d="M396.4 293.100h11.600v5l-9 1z" fill="#2f3338"/><path d="M380.4 303l12-3" stroke="#8aa0b8" stroke-width=".8"/></g>
<text x="375.1" y="310.3" font-size="2.6" fill="#27b088" font-family="Liberation Sans, sans-serif" font-weight="700" textLength="6.5" lengthAdjust="spacingAndGlyphs" stroke="#27b088" stroke-width=".1">Benefits</text>
<circle cx="378.4" cy="312.6" r=".35" fill="#333"/>
<path d="M380.6 312.57h23" stroke="#33363f" stroke-width="0.55" stroke-dasharray="3.2 .3 1.8 .3 1.9 .3 2.7 .3 2.4 .3" opacity="1" fill="none"/>
<path d="M380.6 313.53h18" stroke="#33363f" stroke-width="0.45" stroke-dasharray="4.4 .3 2.1 .3 1.6 .3 4.8 .3 3.3 .3" opacity="0.6" fill="none"/>
<circle cx="378.4" cy="315.2" r=".35" fill="#333"/>
<path d="M380.6 315.18h20" stroke="#33363f" stroke-width="0.55" stroke-dasharray="2.0 .3 3.4 .3 1.6 .3 3.3 .3 4.9 .3" opacity="1" fill="none"/>
<text x="375.1" y="318.9" font-size="2.6" fill="#27b088" font-family="Liberation Sans, sans-serif" font-weight="700" textLength="6" lengthAdjust="spacingAndGlyphs" stroke="#27b088" stroke-width=".1">Options</text>
<circle cx="378.4" cy="321.2" r=".35" fill="#333"/>
<path d="M380.6 321.17h22" stroke="#33363f" stroke-width="0.55" stroke-dasharray="4.5 .3 3.9 .3 2.4 .3 2.8 .3 2.1 .3" opacity="1" fill="none"/>
<path d="M380.6 322.12h18" stroke="#33363f" stroke-width="0.45" stroke-dasharray="4.2 .3 3.4 .3 4.2 .3 2.7 .3 2.3 .3" opacity="0.6" fill="none"/>
<circle cx="378.4" cy="323.8" r=".35" fill="#333"/>
<path d="M380.6 323.77h24" stroke="#33363f" stroke-width="0.55" stroke-dasharray="4.3 .3 4.9 .3 4.5 .3 4.3 .3 4.4 .3" opacity="1" fill="none"/>
<text x="375.1" y="327.7" font-size="2.6" fill="#27b088" font-family="Liberation Sans, sans-serif" font-weight="700" textLength="7" lengthAdjust="spacingAndGlyphs" stroke="#27b088" stroke-width=".1">Plan Terms</text>
<circle cx="378.4" cy="330.0" r=".35" fill="#333"/>
<path d="M380.6 329.97h23" stroke="#33363f" stroke-width="0.55" stroke-dasharray="4.1 .3 2.3 .3 3.3 .3 2.7 .3 1.6 .3" opacity="1" fill="none"/>
<path d="M380.6 330.93h18" stroke="#33363f" stroke-width="0.45" stroke-dasharray="1.6 .3 2.5 .3 2.4 .3 3.9 .3 4.8 .3" opacity="0.6" fill="none"/>
<circle cx="378.4" cy="332.6" r=".35" fill="#333"/>
<path d="M380.6 332.57h21" stroke="#33363f" stroke-width="0.55" stroke-dasharray="3.1 .3 4.8 .3 5.0 .3 4.8 .3 2.8 .3" opacity="1" fill="none"/>
<text x="372.6" y="343.0" font-size="1.7" fill="#b8b8b8" font-family="Liberation Sans, sans-serif" text-anchor="middle" textLength="51.500" lengthAdjust="spacingAndGlyphs" stroke="#b8b8b8" stroke-width=".1">The information provided is for general educational purposes only. Consult your advisor.</text>
</g>
<rect x="325.65" y="281.55" width="93.9" height="66.7" fill="none" stroke="#dedede" stroke-width=".6"/>
<g clip-path="url(#cp10)">
<rect x="454.4" y="281.3" width="94.4" height="67.2" fill="#fff"/>
<path d="M532.1999999999999 281.300h4.600l-3.600 7.300h-4.200z" fill="#27b088"/>
<text x="466.2" y="296.0" font-size="2.6" fill="#3d4150" font-family="Liberation Sans, sans-serif" font-weight="700" textLength="12" lengthAdjust="spacingAndGlyphs" stroke="#3d4150" stroke-width=".1">Plus Trust</text>
<path d="M466.2 298.95h29" stroke="#33363f" stroke-width="0.50" stroke-dasharray="2.3 .3 2.3 .3 2.2 .3 2.2 .3 3.7 .3" opacity="1" fill="none"/>
<path d="M466.2 300.05h29" stroke="#33363f" stroke-width="0.30" stroke-dasharray="4.7 .3 4.4 .3 3.2 .3 3.8 .3 4.3 .3" opacity="1" fill="none"/>
<path d="M466.2 302.17h31" stroke="#33363f" stroke-width="0.55" stroke-dasharray="1.8 .3 3.8 .3 4.7 .3 4.2 .3 4.1 .3" opacity="1" fill="none"/>
<path d="M466.2 303.87h16" stroke="#33363f" stroke-width="0.55" stroke-dasharray="3.2 .3 2.1 .3 4.3 .3 2.7 .3 4.3 .3" opacity="1" fill="none"/>
<path d="M466.2 306.85h33" stroke="#33363f" stroke-width="0.50" stroke-dasharray="4.9 .3 2.9 .3 2.9 .3 4.8 .3 4.0 .3" opacity="1" fill="none"/>
<path d="M466.2 307.95h33" stroke="#33363f" stroke-width="0.30" stroke-dasharray="2.1 .3 1.9 .3 2.0 .3 4.7 .3 4.3 .3" opacity="1" fill="none"/>
<path d="M466.2 309.88h21" stroke="#33363f" stroke-width="0.55" stroke-dasharray="2.0 .3 4.4 .3 4.9 .3 3.8 .3 2.7 .3" opacity="1" fill="none"/>
<text x="466.2" y="314.9" font-size="3.3" fill="#27b088" font-family="Liberation Sans, sans-serif" textLength="14" lengthAdjust="spacingAndGlyphs">Plus Pricing</text>
<rect x="466.2" y="317.2" width="33.2" height="2.4" fill="#a9a9b4"/>
<rect x="466.2" y="319.6" width="33.2" height="5.2" fill="#fff"/>
<rect x="466.2" y="324.8" width="33.2" height="3.8" fill="#e1e1e8"/>
<rect x="466.2" y="328.6" width="33.2" height="5.1" fill="#fff"/>
<rect x="466.2" y="317.0" width="33.2" height=".45" fill="#4a4a52"/>
<rect x="466.2" y="319.4" width="33.2" height=".45" fill="#4a4a52"/>
<rect x="466.2" y="324.6" width="33.2" height=".45" fill="#4a4a52"/>
<rect x="466.2" y="328.4" width="33.2" height=".45" fill="#4a4a52"/>
<rect x="466.2" y="333.5" width="33.2" height=".45" fill="#4a4a52"/>
<rect x="477.1" y="317.2" width=".3" height="16.5" fill="#9a9aa2"/>
<rect x="488.2" y="317.2" width=".3" height="16.5" fill="#9a9aa2"/>
<rect x="467.0" y="318.0" width="6" height=".8" fill="#f0f0f4"/>
<path d="M467.0 321.20h6.5" stroke="#222" stroke-width="0.60" stroke-dasharray="3.4 .3 2.0 .3 1.5 .3 4.9 .3 3.8 .3" opacity="1" fill="none"/>
<path d="M467.0 322.50h5.5" stroke="#222" stroke-width="0.60" stroke-dasharray="3.3 .3 4.8 .3 3.0 .3 4.6 .3 4.4 .3" opacity="1" fill="none"/>
<path d="M467.0 326.60h7.5" stroke="#222" stroke-width="0.80" stroke-dasharray="2.2 .3 2.4 .3 2.5 .3 2.3 .3 3.6 .3" opacity="1" fill="none"/>
<path d="M467.0 330.27h6" stroke="#333" stroke-width="0.55" stroke-dasharray="2.4 .3 3.0 .3 2.0 .3 4.7 .3 2.7 .3" opacity="1" fill="none"/>
<path d="M467.0 331.52h6.5" stroke="#333" stroke-width="0.55" stroke-dasharray="3.1 .3 3.5 .3 4.7 .3 3.0 .3 4.7 .3" opacity="1" fill="none"/>
<path d="M467.0 332.77h4" stroke="#333" stroke-width="0.55" stroke-dasharray="3.3 .3 3.4 .3 3.3 .3 1.6 .3 3.0 .3" opacity="1" fill="none"/>
<rect x="478.1" y="318.0" width="6" height=".8" fill="#f0f0f4"/>
<path d="M478.1 321.20h6.5" stroke="#222" stroke-width="0.60" stroke-dasharray="2.1 .3 1.5 .3 4.3 .3 2.1 .3 3.2 .3" opacity="1" fill="none"/>
<path d="M478.1 322.50h5.5" stroke="#222" stroke-width="0.60" stroke-dasharray="4.0 .3 3.4 .3 2.6 .3 3.3 .3 3.4 .3" opacity="1" fill="none"/>
<path d="M478.1 326.60h7.5" stroke="#222" stroke-width="0.80" stroke-dasharray="4.2 .3 1.9 .3 3.5 .3 2.4 .3 2.5 .3" opacity="1" fill="none"/>
<path d="M478.1 330.27h6" stroke="#333" stroke-width="0.55" stroke-dasharray="4.2 .3 3.3 .3 3.5 .3 4.2 .3 4.7 .3" opacity="1" fill="none"/>
<path d="M478.1 331.52h6.5" stroke="#333" stroke-width="0.55" stroke-dasharray="3.1 .3 3.6 .3 3.3 .3 3.3 .3 3.9 .3" opacity="1" fill="none"/>
<path d="M478.1 332.77h4" stroke="#333" stroke-width="0.55" stroke-dasharray="3.1 .3 3.4 .3 3.2 .3 4.8 .3 3.9 .3" opacity="1" fill="none"/>
<rect x="489.1" y="318.0" width="6" height=".8" fill="#f0f0f4"/>
<path d="M489.1 321.20h6.5" stroke="#222" stroke-width="0.60" stroke-dasharray="4.6 .3 4.8 .3 2.4 .3 3.5 .3 4.8 .3" opacity="1" fill="none"/>
<path d="M489.1 322.50h5.5" stroke="#222" stroke-width="0.60" stroke-dasharray="4.4 .3 2.0 .3 1.9 .3 3.0 .3 1.8 .3" opacity="1" fill="none"/>
<path d="M489.1 326.60h7.5" stroke="#222" stroke-width="0.80" stroke-dasharray="2.3 .3 1.8 .3 3.8 .3 4.2 .3 4.6 .3" opacity="1" fill="none"/>
<path d="M489.1 330.27h6" stroke="#333" stroke-width="0.55" stroke-dasharray="2.0 .3 4.0 .3 3.8 .3 2.0 .3 4.6 .3" opacity="1" fill="none"/>
<path d="M489.1 331.52h6.5" stroke="#333" stroke-width="0.55" stroke-dasharray="4.9 .3 2.3 .3 4.8 .3 2.9 .3 3.2 .3" opacity="1" fill="none"/>
<path d="M489.1 332.77h4" stroke="#333" stroke-width="0.55" stroke-dasharray="5.0 .3 4.4 .3 2.1 .3 3.0 .3 3.3 .3" opacity="1" fill="none"/>
<g filter="url(#b0)"><rect x="504.09999999999997" y="293.100" width="29.700" height="12.500" fill="url(#warm)"/>
<ellipse cx="513.4" cy="301" rx="4" ry="2.500" fill="#fff" opacity=".9"/><ellipse cx="523.4" cy="303" rx="6" ry="2" fill="#fff" opacity=".8"/><circle cx="527.4" cy="296" r="2.200" fill="#d98c5a"/><path d="M504.09999999999997 293.100h8l-8 9z" fill="#e08a2e"/><rect x="529.4" y="296" width="4.400" height="5" fill="#4f7f92"/></g>
<text x="504.1" y="310.3" font-size="2.6" fill="#27b088" font-family="Liberation Sans, sans-serif" font-weight="700" textLength="11.5" lengthAdjust="spacingAndGlyphs" stroke="#27b088" stroke-width=".1">Eligibility Benefits</text>
<text x="504.1" y="320.7" font-size="2.6" fill="#27b088" font-family="Liberation Sans, sans-serif" font-weight="700" textLength="12" lengthAdjust="spacingAndGlyphs" stroke="#27b088" stroke-width=".1">Flexible Options</text>
<text x="504.1" y="329.3" font-size="2.6" fill="#27b088" font-family="Liberation Sans, sans-serif" font-weight="700" textLength="21" lengthAdjust="spacingAndGlyphs" stroke="#27b088" stroke-width=".1">Agreements and Minimums</text>
<path d="M504.1 312.17h20" stroke="#33363f" stroke-width="0.55" stroke-dasharray="2.7 .3 2.2 .3 2.6 .3 4.0 .3 1.6 .3" opacity="1" fill="none"/>
<path d="M504.1 313.72h24" stroke="#33363f" stroke-width="0.55" stroke-dasharray="3.4 .3 3.0 .3 1.6 .3 2.7 .3 3.7 .3" opacity="1" fill="none"/>
<path d="M504.1 315.27h23" stroke="#33363f" stroke-width="0.55" stroke-dasharray="3.3 .3 1.7 .3 4.9 .3 4.3 .3 4.9 .3" opacity="1" fill="none"/>
<path d="M504.1 316.82h23" stroke="#33363f" stroke-width="0.55" stroke-dasharray="1.9 .3 2.4 .3 1.6 .3 4.2 .3 2.4 .3" opacity="1" fill="none"/>
<path d="M504.1 322.57h20" stroke="#33363f" stroke-width="0.55" stroke-dasharray="2.0 .3 3.0 .3 4.7 .3 4.4 .3 2.4 .3" opacity="1" fill="none"/>
<path d="M504.1 324.07h32" stroke="#33363f" stroke-width="0.55" stroke-dasharray="2.0 .3 4.7 .3 3.5 .3 4.0 .3 1.8 .3" opacity="1" fill="none"/>
<path d="M504.1 325.57h28" stroke="#33363f" stroke-width="0.55" stroke-dasharray="1.7 .3 3.9 .3 3.0 .3 1.8 .3 4.8 .3" opacity="1" fill="none"/>
<path d="M504.1 331.27h33" stroke="#33363f" stroke-width="0.55" stroke-dasharray="3.7 .3 4.3 .3 1.8 .3 4.5 .3 1.7 .3" opacity="1" fill="none"/>
<path d="M504.1 332.72h33" stroke="#33363f" stroke-width="0.55" stroke-dasharray="4.5 .3 3.1 .3 2.7 .3 3.4 .3 4.7 .3" opacity="1" fill="none"/>
<path d="M504.1 334.17h12" stroke="#33363f" stroke-width="0.55" stroke-dasharray="2.4 .3 2.0 .3 3.3 .3 2.3 .3 1.9 .3" opacity="1" fill="none"/>
<text x="501.6" y="343.0" font-size="1.7" fill="#b8b8b8" font-family="Liberation Sans, sans-serif" text-anchor="middle" textLength="51.500" lengthAdjust="spacingAndGlyphs" stroke="#b8b8b8" stroke-width=".1">The information provided is for general educational purposes only. Consult your advisor.</text>
</g>
<rect x="454.65" y="281.55" width="93.9" height="66.7" fill="none" stroke="#dedede" stroke-width=".6"/>
<g clip-path="url(#cp11)">
<rect x="583.4" y="281.3" width="94.4" height="67.2" fill="#fff"/>
<path d="M661.1999999999999 281.300h4.600l-3.600 7.300h-4.200z" fill="#27b088"/>
<text x="595.2" y="296.0" font-size="2.6" fill="#3d4150" font-family="Liberation Sans, sans-serif" font-weight="700" textLength="17.8" lengthAdjust="spacingAndGlyphs" stroke="#3d4150" stroke-width=".1">Platinum Trust</text>
<path d="M595.2 298.97h32" stroke="#33363f" stroke-width="0.55" stroke-dasharray="2.1 .3 1.7 .3 2.2 .3 2.6 .3 2.6 .3" opacity="0.8" fill="none"/>
<path d="M595.2 300.47h5" stroke="#33363f" stroke-width="0.55" stroke-dasharray="4.2 .3 2.5 .3 3.3 .3 2.1 .3 2.7 .3" opacity="0.8" fill="none"/>
<path d="M595.2 303.27h32" stroke="#23262f" stroke-width="0.55" stroke-dasharray="1.6 .3 2.4 .3 1.6 .3 4.1 .3 3.4 .3" opacity="1" fill="none"/>
<path d="M595.2 304.77h31" stroke="#23262f" stroke-width="0.55" stroke-dasharray="2.2 .3 3.2 .3 4.8 .3 1.9 .3 4.4 .3" opacity="1" fill="none"/>
<path d="M595.2 306.27h22" stroke="#23262f" stroke-width="0.55" stroke-dasharray="3.0 .3 3.2 .3 4.4 .3 2.9 .3 3.3 .3" opacity="1" fill="none"/>
<path d="M595.2 309.07h32" stroke="#33363f" stroke-width="0.55" stroke-dasharray="3.9 .3 4.9 .3 2.7 .3 4.4 .3 4.0 .3" opacity="0.8" fill="none"/>
<path d="M595.2 310.43h33" stroke="#33363f" stroke-width="0.55" stroke-dasharray="3.7 .3 2.9 .3 2.7 .3 1.7 .3 2.0 .3" opacity="0.8" fill="none"/>
<path d="M595.2 311.77h33" stroke="#33363f" stroke-width="0.55" stroke-dasharray="1.7 .3 4.1 .3 2.4 .3 2.1 .3 1.8 .3" opacity="0.8" fill="none"/>
<text x="595.2" y="316.2" font-size="3.2" fill="#27b088" font-family="Liberation Sans, sans-serif" textLength="18.500" lengthAdjust="spacingAndGlyphs">Platinum Pricing</text>
<rect x="595.1999999999999" y="317.4" width="33.2" height="2.4" fill="#a9a9b4"/>
<rect x="595.1999999999999" y="319.8" width="33.2" height="5.2" fill="#fff"/>
<rect x="595.1999999999999" y="325.0" width="33.2" height="3.8" fill="#e1e1e8"/>
<rect x="595.1999999999999" y="328.8" width="33.2" height="4.9" fill="#fff"/>
<rect x="595.1999999999999" y="317.2" width="33.2" height=".45" fill="#4a4a52"/>
<rect x="595.1999999999999" y="319.6" width="33.2" height=".45" fill="#4a4a52"/>
<rect x="595.1999999999999" y="324.8" width="33.2" height=".45" fill="#4a4a52"/>
<rect x="595.1999999999999" y="328.6" width="33.2" height=".45" fill="#4a4a52"/>
<rect x="595.1999999999999" y="333.5" width="33.2" height=".45" fill="#4a4a52"/>
<rect x="606.1" y="317.4" width=".3" height="16.3" fill="#9a9aa2"/>
<rect x="617.2" y="317.4" width=".3" height="16.3" fill="#9a9aa2"/>
<rect x="596.0" y="318.2" width="6" height=".8" fill="#f0f0f4"/>
<path d="M596.0 321.40h6.5" stroke="#222" stroke-width="0.60" stroke-dasharray="4.4 .3 4.5 .3 3.8 .3 2.5 .3 2.3 .3" opacity="1" fill="none"/>
<path d="M596.0 322.70h5.5" stroke="#222" stroke-width="0.60" stroke-dasharray="2.5 .3 3.1 .3 2.1 .3 3.1 .3 2.4 .3" opacity="1" fill="none"/>
<path d="M596.0 326.80h7.5" stroke="#222" stroke-width="0.80" stroke-dasharray="4.9 .3 4.9 .3 3.4 .3 2.4 .3 4.9 .3" opacity="1" fill="none"/>
<path d="M596.0 330.47h6" stroke="#333" stroke-width="0.55" stroke-dasharray="2.6 .3 2.7 .3 1.5 .3 2.8 .3 3.2 .3" opacity="1" fill="none"/>
<path d="M596.0 331.72h6.5" stroke="#333" stroke-width="0.55" stroke-dasharray="3.3 .3 2.2 .3 3.3 .3 1.5 .3 2.4 .3" opacity="1" fill="none"/>
<path d="M596.0 332.97h4" stroke="#333" stroke-width="0.55" stroke-dasharray="1.8 .3 2.9 .3 1.6 .3 1.6 .3 2.6 .3" opacity="1" fill="none"/>
<rect x="607.1" y="318.2" width="6" height=".8" fill="#f0f0f4"/>
<path d="M607.1 321.40h6.5" stroke="#222" stroke-width="0.60" stroke-dasharray="2.3 .3 3.5 .3 3.4 .3 4.1 .3 3.8 .3" opacity="1" fill="none"/>
<path d="M607.1 322.70h5.5" stroke="#222" stroke-width="0.60" stroke-dasharray="4.0 .3 4.6 .3 2.9 .3 2.6 .3 4.9 .3" opacity="1" fill="none"/>
<path d="M607.1 326.80h7.5" stroke="#222" stroke-width="0.80" stroke-dasharray="2.0 .3 4.0 .3 3.8 .3 1.7 .3 4.4 .3" opacity="1" fill="none"/>
<path d="M607.1 330.47h6" stroke="#333" stroke-width="0.55" stroke-dasharray="4.6 .3 3.7 .3 4.1 .3 4.3 .3 2.0 .3" opacity="1" fill="none"/>
<path d="M607.1 331.72h6.5" stroke="#333" stroke-width="0.55" stroke-dasharray="3.3 .3 3.3 .3 4.4 .3 4.3 .3 4.4 .3" opacity="1" fill="none"/>
<path d="M607.1 332.97h4" stroke="#333" stroke-width="0.55" stroke-dasharray="3.5 .3 4.6 .3 3.9 .3 3.9 .3 2.3 .3" opacity="1" fill="none"/>
<rect x="618.1" y="318.2" width="6" height=".8" fill="#f0f0f4"/>
<path d="M618.1 321.40h6.5" stroke="#222" stroke-width="0.60" stroke-dasharray="1.6 .3 2.0 .3 2.8 .3 1.9 .3 4.4 .3" opacity="1" fill="none"/>
<path d="M618.1 322.70h5.5" stroke="#222" stroke-width="0.60" stroke-dasharray="3.5 .3 3.7 .3 3.7 .3 3.9 .3 3.2 .3" opacity="1" fill="none"/>
<path d="M618.1 326.80h7.5" stroke="#222" stroke-width="0.80" stroke-dasharray="1.5 .3 4.3 .3 4.1 .3 3.3 .3 3.4 .3" opacity="1" fill="none"/>
<path d="M618.1 330.47h6" stroke="#333" stroke-width="0.55" stroke-dasharray="3.8 .3 1.7 .3 4.1 .3 2.4 .3 1.8 .3" opacity="1" fill="none"/>
<path d="M618.1 331.72h6.5" stroke="#333" stroke-width="0.55" stroke-dasharray="2.4 .3 4.1 .3 2.2 .3 4.1 .3 4.9 .3" opacity="1" fill="none"/>
<path d="M618.1 332.97h4" stroke="#333" stroke-width="0.55" stroke-dasharray="3.2 .3 2.8 .3 3.2 .3 3.9 .3 4.2 .3" opacity="1" fill="none"/>
<g filter="url(#b0)"><rect x="633.5" y="293.100" width="32.700" height="13.200" fill="#b7743f"/>
<rect x="635.4" y="301" width="4.500" height="4" fill="#e8ece8" transform="rotate(-15 637.4 303)"/><rect x="640.4" y="298" width="4" height="3" fill="#3a3a3a"/><rect x="643.4" y="294" width="7" height="4" fill="#f1efe9" transform="rotate(20 646.4 296)"/><rect x="653.4" y="296" width="6" height="5" fill="#f4f4f2" transform="rotate(-25 656.4 298)"/><circle cx="660.4" cy="302" r="2.500" fill="#2f4a4a"/><rect x="649.4" y="300" width="4" height="5" fill="#dfe5e6"/><path d="M651.4 293.100h9l-3 3.500z" fill="#e9e4dc"/><rect x="662.4" y="293.100" width="3.800" height="5" fill="#d9a36c"/></g>
<text x="633.5" y="312.0" font-size="2.6" fill="#27b088" font-family="Liberation Sans, sans-serif" font-weight="700" textLength="17.5" lengthAdjust="spacingAndGlyphs" stroke="#27b088" stroke-width=".1">Exclusive Benefits</text>
<text x="633.5" y="321.0" font-size="2.6" fill="#27b088" font-family="Liberation Sans, sans-serif" font-weight="700" textLength="18.5" lengthAdjust="spacingAndGlyphs" stroke="#27b088" stroke-width=".1">Estate Plan Documents</text>
<text x="633.5" y="327.8" font-size="2.6" fill="#27b088" font-family="Liberation Sans, sans-serif" font-weight="700" textLength="17.5" lengthAdjust="spacingAndGlyphs" stroke="#27b088" stroke-width=".1">Direct Giving Minimum</text>
<path d="M633.5 313.88h27" stroke="#23262f" stroke-width="0.55" stroke-dasharray="3.7 .3 3.7 .3 1.8 .3 2.0 .3 2.4 .3" opacity="1" fill="none"/>
<path d="M633.5 315.07h32" stroke="#23262f" stroke-width="0.55" stroke-dasharray="4.1 .3 2.6 .3 3.5 .3 1.5 .3 1.7 .3" opacity="1" fill="none"/>
<path d="M633.5 316.27h32" stroke="#23262f" stroke-width="0.55" stroke-dasharray="2.4 .3 3.9 .3 3.9 .3 3.9 .3 2.5 .3" opacity="1" fill="none"/>
<path d="M633.5 317.67h18" stroke="#33363f" stroke-width="0.55" stroke-dasharray="3.3 .3 3.1 .3 3.1 .3 1.9 .3 4.6 .3" opacity="1" fill="none"/>
<path d="M633.5 323.07h31" stroke="#33363f" stroke-width="0.55" stroke-dasharray="2.2 .3 4.9 .3 4.8 .3 1.6 .3 3.1 .3" opacity="1" fill="none"/>
<path d="M633.5 324.57h26" stroke="#33363f" stroke-width="0.55" stroke-dasharray="4.4 .3 4.9 .3 3.1 .3 2.4 .3 2.2 .3" opacity="1" fill="none"/>
<path d="M633.5 330.07h32" stroke="#33363f" stroke-width="0.55" stroke-dasharray="4.8 .3 2.2 .3 3.5 .3 2.0 .3 3.3 .3" opacity="0.8" fill="none"/>
<path d="M633.5 331.68h12" stroke="#33363f" stroke-width="0.55" stroke-dasharray="4.8 .3 2.0 .3 4.4 .3 3.3 .3 4.6 .3" opacity="0.8" fill="none"/>
<text x="630.6" y="343.0" font-size="1.7" fill="#b8b8b8" font-family="Liberation Sans, sans-serif" text-anchor="middle" textLength="51.500" lengthAdjust="spacingAndGlyphs" stroke="#b8b8b8" stroke-width=".1">The information provided is for general educational purposes only. Consult your advisor.</text>
</g>
<rect x="583.65" y="281.55" width="93.9" height="66.7" fill="none" stroke="#dedede" stroke-width=".6"/>
<g clip-path="url(#cp12)">
<rect x="712.4" y="281.3" width="94.4" height="67.2" fill="#fff"/>
<path d="M790.1999999999999 281.300h4.600l-3.600 7.300h-4.200z" fill="#27b088"/>
<text x="724.2" y="296.0" font-size="2.6" fill="#3d4150" font-family="Liberation Sans, sans-serif" font-weight="700" textLength="25.200" lengthAdjust="spacingAndGlyphs" stroke="#3d4150" stroke-width=".1">Common Questions</text>
<text x="724.2" y="299.9" font-size="2.6" fill="#27b088" font-family="Liberation Sans, sans-serif" textLength="22.5" lengthAdjust="spacingAndGlyphs" stroke="#27b088" stroke-width=".1">How do I fill out an order form?</text>
<path d="M724.2 301.87h66" stroke="#23262f" stroke-width="0.55" stroke-dasharray="4.0 .3 2.3 .3 4.6 .3 3.2 .3 1.6 .3" opacity="1" fill="none"/>
<path d="M724.2 303.27h7" stroke="#23262f" stroke-width="0.55" stroke-dasharray="1.5 .3 3.2 .3 3.1 .3 2.6 .3 2.0 .3" opacity="1" fill="none"/>
<text x="724.2" y="307.2" font-size="2.6" fill="#27b088" font-family="Liberation Sans, sans-serif" textLength="26" lengthAdjust="spacingAndGlyphs" stroke="#27b088" stroke-width=".1">Can I be a trustee and beneficiary?</text>
<path d="M724.2 309.17h70.5" stroke="#23262f" stroke-width="0.55" stroke-dasharray="2.7 .3 2.6 .3 4.4 .3 1.5 .3 4.1 .3" opacity="1" fill="none"/>
<path d="M724.2 310.57h7" stroke="#23262f" stroke-width="0.55" stroke-dasharray="4.4 .3 1.9 .3 4.7 .3 4.0 .3 4.7 .3" opacity="1" fill="none"/>
<text x="724.2" y="315.1" font-size="2.6" fill="#27b088" font-family="Liberation Sans, sans-serif" textLength="23" lengthAdjust="spacingAndGlyphs" stroke="#27b088" stroke-width=".1">How often are statements sent?</text>
<path d="M724.2 317.07h63.5" stroke="#23262f" stroke-width="0.55" stroke-dasharray="2.5 .3 2.8 .3 2.9 .3 5.0 .3 3.6 .3" opacity="1" fill="none"/>
<text x="724.2" y="321.1" font-size="2.6" fill="#27b088" font-family="Liberation Sans, sans-serif" textLength="23" lengthAdjust="spacingAndGlyphs" stroke="#27b088" stroke-width=".1">How do I make a withdrawal?</text>
<path d="M724.2 323.07h68.5" stroke="#23262f" stroke-width="0.55" stroke-dasharray="2.8 .3 3.0 .3 2.5 .3 1.7 .3 1.9 .3" opacity="1" fill="none"/>
<path d="M724.2 324.47h53" stroke="#23262f" stroke-width="0.55" stroke-dasharray="4.4 .3 2.5 .3 4.8 .3 2.4 .3 2.4 .3" opacity="1" fill="none"/>
<text x="724.2" y="328.8" font-size="2.6" fill="#27b088" font-family="Liberation Sans, sans-serif" textLength="25.5" lengthAdjust="spacingAndGlyphs" stroke="#27b088" stroke-width=".1">Who can I talk to about fees?</text>
<path d="M724.2 330.77h15.5" stroke="#23262f" stroke-width="0.55" stroke-dasharray="3.3 .3 2.2 .3 2.8 .3 4.8 .3 4.6 .3" opacity="1" fill="none"/>
<text x="759.6" y="343.0" font-size="1.7" fill="#b8b8b8" font-family="Liberation Sans, sans-serif" text-anchor="middle" textLength="51.500" lengthAdjust="spacingAndGlyphs" stroke="#b8b8b8" stroke-width=".1">The information provided is for general educational purposes only. Consult your advisor.</text>
</g>
<rect x="712.65" y="281.55" width="93.9" height="66.7" fill="none" stroke="#dedede" stroke-width=".6"/>
</svg>
<!-- THUMBS-END -->
</div>
</body>
</html>
